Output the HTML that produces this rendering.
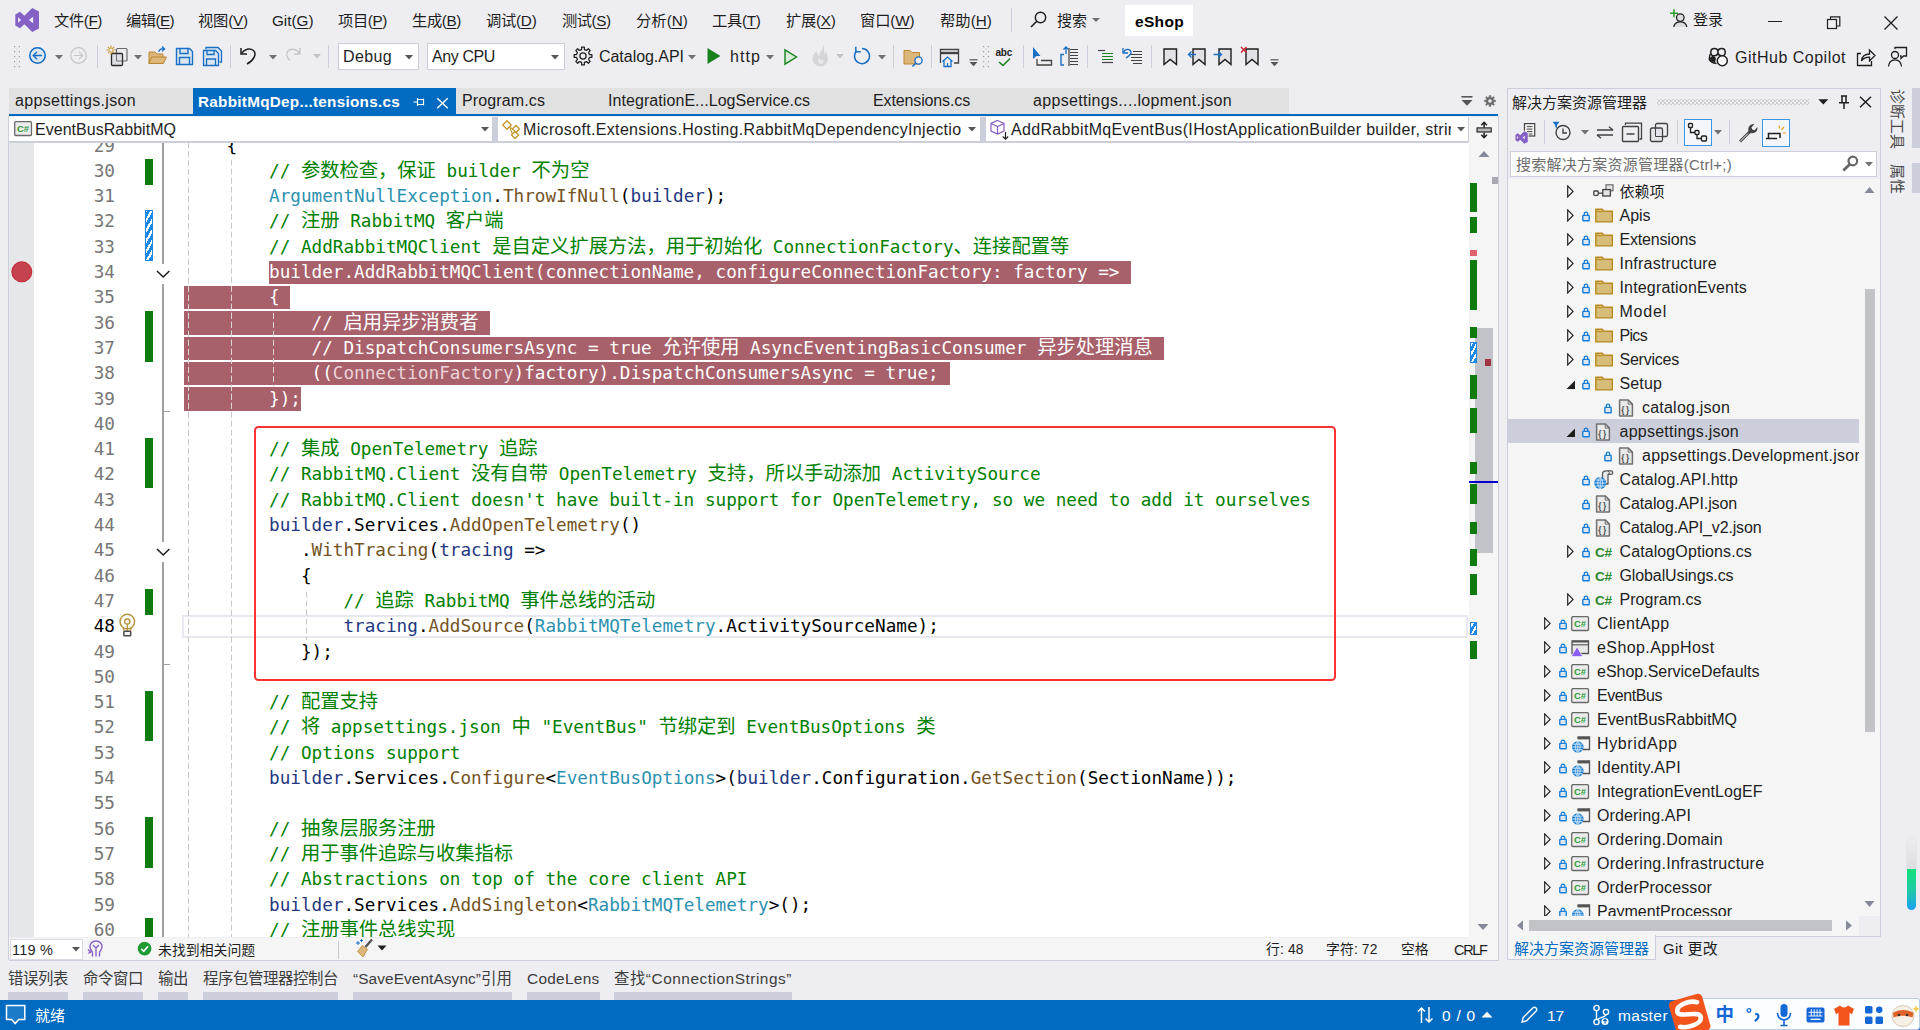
<!DOCTYPE html>
<html lang="zh-CN"><head><meta charset="utf-8"><title>eShop - Microsoft Visual Studio</title>
<style>
html,body{margin:0;padding:0;}
body{width:1920px;height:1030px;overflow:hidden;background:#eeeef2;position:relative;font-family:"Liberation Sans","Noto Sans CJK SC",sans-serif;font-size:15px;color:#1e1e1e;}
div,span.t,svg{position:absolute;box-sizing:border-box;}
span.t{white-space:pre;display:block;}
.u{text-decoration:underline;text-underline-offset:2px;text-decoration-thickness:1px;}
.cl{position:absolute;left:184px;height:25.3px;line-height:25.3px;white-space:pre;font-family:"DejaVu Sans Mono","Liberation Mono","Noto Sans CJK SC",monospace;font-size:17.67px;color:#000;}
.cl .c{font-family:"Noto Sans CJK SC",sans-serif;font-size:19.3px;line-height:0;}
.ln{position:absolute;left:51px;width:55px;text-align:right;height:25.3px;line-height:25.3px;font-family:"DejaVu Sans Mono","Liberation Mono","Noto Sans CJK SC",monospace;font-size:17.67px;color:#767676;}
.cm{color:#008000} .ty{color:#2b91af} .fn{color:#74531f} .lv{color:#1f377f} .kw{color:#0000ff}
.sel,.sel span{color:#fff !important}
.sel span.dim{color:#ecd3d7 !important}
</style></head>
<body>
<svg style="left:15px;top:8px;" width="25" height="25" viewBox="0 0 25 25"><path d="M17.2 0.1 L24 3.4 V20.6 L17.2 23.9 L9.4 16.3 L5 20.2 L0.3 17.4 V6.6 L5 3.8 L9.4 7.7 Z M3.1 9.2 V14.8 L6.1 12 Z M18.1 8.7 V15.3 L13.9 12 Z" fill="#8661c5" fill-rule="evenodd"/></svg>
<span id="f0" class="t" style="left:54px;top:11.0px;height:20px;line-height:20px;font-size:15.3px;color:#1e1e1e;letter-spacing:-0.43px;">文件(<span class="u">F</span>)</span>
<span id="f1" class="t" style="left:126px;top:11.0px;height:20px;line-height:20px;font-size:15.3px;color:#1e1e1e;letter-spacing:-0.60px;">编辑(<span class="u">E</span>)</span>
<span id="f2" class="t" style="left:198px;top:11.0px;height:20px;line-height:20px;font-size:15.3px;color:#1e1e1e;letter-spacing:-0.20px;">视图(<span class="u">V</span>)</span>
<span id="f3" class="t" style="left:272px;top:11.0px;height:20px;line-height:20px;font-size:15.3px;color:#1e1e1e;letter-spacing:-0.03px;">Git(<span class="u">G</span>)</span>
<span id="f4" class="t" style="left:338px;top:11.0px;height:20px;line-height:20px;font-size:15.3px;color:#1e1e1e;letter-spacing:-0.40px;">项目(<span class="u">P</span>)</span>
<span id="f5" class="t" style="left:412px;top:11.0px;height:20px;line-height:20px;font-size:15.3px;color:#1e1e1e;letter-spacing:-0.40px;">生成(<span class="u">B</span>)</span>
<span id="f6" class="t" style="left:486px;top:11.0px;height:20px;line-height:20px;font-size:15.3px;color:#1e1e1e;letter-spacing:-0.28px;">调试(<span class="u">D</span>)</span>
<span id="f7" class="t" style="left:562px;top:11.0px;height:20px;line-height:20px;font-size:15.3px;color:#1e1e1e;letter-spacing:-0.50px;">测试(<span class="u">S</span>)</span>
<span id="f8" class="t" style="left:636px;top:11.0px;height:20px;line-height:20px;font-size:15.3px;color:#1e1e1e;letter-spacing:0.03px;">分析(<span class="u">N</span>)</span>
<span id="f9" class="t" style="left:712px;top:11.0px;height:20px;line-height:20px;font-size:15.3px;color:#1e1e1e;letter-spacing:-0.33px;">工具(<span class="u">T</span>)</span>
<span id="f10" class="t" style="left:786px;top:11.0px;height:20px;line-height:20px;font-size:15.3px;color:#1e1e1e;letter-spacing:-0.30px;">扩展(<span class="u">X</span>)</span>
<span id="f11" class="t" style="left:860px;top:11.0px;height:20px;line-height:20px;font-size:15.3px;color:#1e1e1e;letter-spacing:-0.15px;">窗口(<span class="u">W</span>)</span>
<span id="f12" class="t" style="left:940px;top:11.0px;height:20px;line-height:20px;font-size:15.3px;color:#1e1e1e;letter-spacing:0.03px;">帮助(<span class="u">H</span>)</span>
<div style="left:1011px;top:8px;width:1px;height:24px;background:#cccedb;"></div>
<svg style="left:1029px;top:10px;" width="20" height="20" viewBox="0 0 20 20"><circle cx="11.5" cy="7.5" r="5.2" fill="none" stroke="#1e1e1e" stroke-width="1.4"/><path d="M7.8 11.2 L2 17" stroke="#1e1e1e" stroke-width="1.6" fill="none"/></svg>
<span class="t" style="left:1057px;top:10.6px;height:20px;line-height:20px;font-size:15px;color:#1e1e1e;">搜索</span>
<svg style="left:1091px;top:17px;" width="10" height="6" viewBox="0 0 10 6"><path d="M1 1 H9 L5 5 Z" fill="#717171"/></svg>
<div style="left:1125px;top:5px;width:68px;height:31px;background:#ffffff;"></div>
<span id="f13" class="t" style="left:1135px;top:11.8px;height:20px;line-height:20px;font-size:15.5px;color:#000;font-weight:bold;letter-spacing:0.33px;">eShop</span>
<svg style="left:1669px;top:8px;" width="20" height="20" viewBox="0 0 20 20"><circle cx="11.3" cy="9.6" r="3.8" fill="#dcdce2" stroke="#1e1e1e" stroke-width="1.3"/><path d="M4.8 19 C5.3 15.2 8.2 13.8 11.3 13.8 C14.4 13.8 17.3 15.2 17.8 19" fill="#dcdce2" stroke="#1e1e1e" stroke-width="1.3"/><path d="M1 5.3 H9 M5 1.3 V9.3" stroke="#2a9a2a" stroke-width="1.5"/></svg>
<span class="t" style="left:1693px;top:10.0px;height:20px;line-height:20px;font-size:15px;color:#1e1e1e;">登录</span>
<div style="left:1768px;top:20.8px;width:14px;height:1.1px;background:#1e1e1e;"></div>
<svg style="left:1825.5px;top:15px;" width="16" height="16" viewBox="0 0 16 16"><rect x="1.5" y="4.5" width="9" height="9" fill="none" stroke="#1e1e1e" stroke-width="1.2"/><path d="M4.5 4.5 V1.8 H13.8 V11 H10.5" fill="none" stroke="#1e1e1e" stroke-width="1.2"/></svg>
<svg style="left:1883px;top:14.6px;" width="16" height="16" viewBox="0 0 16 16"><path d="M1.5 1.5 L14.5 14.5 M14.5 1.5 L1.5 14.5" stroke="#1e1e1e" stroke-width="1.3"/></svg>
<svg style="left:13px;top:46px;" width="8" height="24" viewBox="0 0 8 24"><rect x="1.1" y="0.1" width="1.1" height="1.1" fill="#8a8a92"/><rect x="5.8" y="0.1" width="1.1" height="1.1" fill="#8a8a92"/><rect x="3.5" y="2.6" width="1.1" height="1.1" fill="#c4c4cc"/><rect x="1.1" y="5.1" width="1.1" height="1.1" fill="#8a8a92"/><rect x="5.8" y="5.1" width="1.1" height="1.1" fill="#8a8a92"/><rect x="3.5" y="7.6" width="1.1" height="1.1" fill="#c4c4cc"/><rect x="1.1" y="10.1" width="1.1" height="1.1" fill="#8a8a92"/><rect x="5.8" y="10.1" width="1.1" height="1.1" fill="#8a8a92"/><rect x="3.5" y="12.6" width="1.1" height="1.1" fill="#c4c4cc"/><rect x="1.1" y="15.1" width="1.1" height="1.1" fill="#8a8a92"/><rect x="5.8" y="15.1" width="1.1" height="1.1" fill="#8a8a92"/><rect x="3.5" y="17.6" width="1.1" height="1.1" fill="#c4c4cc"/><rect x="1.1" y="20.1" width="1.1" height="1.1" fill="#8a8a92"/><rect x="5.8" y="20.1" width="1.1" height="1.1" fill="#8a8a92"/></svg>
<svg style="left:27.8px;top:45.9px;" width="19" height="19" viewBox="0 0 19 19"><circle cx="9.5" cy="9.5" r="7.7" fill="#dce6f2" stroke="#0f69c0" stroke-width="1.5"/><path d="M14 9.5 H5.5 M9 5.8 L5.3 9.5 L9 13.2" fill="none" stroke="#1a6fc4" stroke-width="1.4"/></svg>
<svg style="left:55px;top:54.6px;" width="8" height="5" viewBox="0 0 8 5"><path d="M0 0 H8 L4 4.5 Z" fill="#717171"/></svg>
<svg style="left:69px;top:46.2px;" width="19" height="19" viewBox="0 0 19 19"><circle cx="9.5" cy="9.5" r="7.8" fill="none" stroke="#c4c4cc" stroke-width="1.2"/><path d="M5 9.5 H13.5 M10 5.8 L13.7 9.5 L10 13.2" fill="none" stroke="#c4c4cc" stroke-width="1.2"/></svg>
<div style="left:97px;top:45px;width:1px;height:23px;background:#cccedb;"></div>
<svg style="left:106px;top:45px;" width="23" height="22" viewBox="0 0 23 22"><rect x="10.5" y="3.5" width="10.5" height="12.5" rx="1" fill="#ececf0" stroke="#6a6a6a" stroke-width="1.2"/><rect x="5.5" y="8.5" width="11" height="12" rx="1" fill="#dedee6" stroke="#2a2a2a" stroke-width="1.3"/><path d="M10.5 9 V16 H16.5" fill="none" stroke="#6a6a6a" stroke-width="0.9"/><path d="M5 0.5 V9.5 M0.5 5 H9.5 M1.8 1.8 L8.2 8.2 M8.2 1.8 L1.8 8.2" stroke="#c8962a" stroke-width="1.1"/><circle cx="5" cy="5" r="1.6" fill="#eeeef2"/></svg>
<svg style="left:134px;top:54.6px;" width="8" height="5" viewBox="0 0 8 5"><path d="M0 0 H8 L4 4.5 Z" fill="#717171"/></svg>
<svg style="left:148px;top:46px;" width="21" height="20" viewBox="0 0 21 20"><path d="M1 6 H7 L9 8 H15 V17 H1 Z" fill="#dcb67a" stroke="#b8862e" stroke-width="1"/><path d="M3.5 11 H18.5 L15.5 17.5 H0.8 Z" fill="#dcb67a" stroke="#b8862e" stroke-width="1"/><path d="M11 6 C11 3.5 13 2.5 16 2.8 M14 0.6 L16.6 2.9 L14 5.4" fill="none" stroke="#1a6fc4" stroke-width="1.3"/></svg>
<svg style="left:175px;top:47px;" width="19" height="19" viewBox="0 0 19 19"><path d="M1.5 1.5 H14.5 L17.5 4.5 V17.5 H1.5 Z" fill="#dbe6f3" stroke="#1a6fc4" stroke-width="1.4"/><path d="M5 1.5 V6.5 H13 V1.5 M4.5 17.5 V10.5 H14.5 V17.5" fill="none" stroke="#1a6fc4" stroke-width="1.4"/></svg>
<svg style="left:202px;top:46px;" width="21" height="21" viewBox="0 0 21 21"><path d="M4 3.5 V1.5 H16 L19.5 5 V16 H17.5" fill="#dbe6f3" stroke="#1a6fc4" stroke-width="1.3"/><path d="M1.5 4.5 H13.5 L16.5 7.5 V19.5 H1.5 Z" fill="#dbe6f3" stroke="#1a6fc4" stroke-width="1.3"/><path d="M5 4.5 V8.5 H12 V4.5 M4.5 19.5 V13 H13.5 V19.5" fill="none" stroke="#1a6fc4" stroke-width="1.3"/></svg>
<div style="left:230px;top:45px;width:1px;height:23px;background:#cccedb;"></div>
<svg style="left:239px;top:46px;" width="20" height="20" viewBox="0 0 20 20"><path d="M2 2 V8 H8" fill="none" stroke="#1e1e1e" stroke-width="1.5"/><path d="M2.5 7.5 C5 3 11 1.5 14.5 4.5 C18 8 15 14 8 18" fill="none" stroke="#1e1e1e" stroke-width="1.5"/></svg>
<svg style="left:269px;top:54.6px;" width="8" height="5" viewBox="0 0 8 5"><path d="M0 0 H8 L4 4.5 Z" fill="#717171"/></svg>
<svg style="left:284px;top:46px;" width="20" height="20" viewBox="0 0 20 20"><path d="M16 2 V8 H10" fill="none" stroke="#c4c4cc" stroke-width="1.4"/><path d="M15.5 7.5 C13 3 7 2 4 5 C1.5 8 3 12 6 14.5" fill="none" stroke="#c4c4cc" stroke-width="1.4"/></svg>
<svg style="left:313px;top:54px;" width="8" height="5" viewBox="0 0 8 5"><path d="M0 0 H8 L4 4.5 Z" fill="#c0c0c8"/></svg>
<div style="left:328px;top:45px;width:1px;height:23px;background:#cccedb;"></div>
<div style="left:338px;top:43.2px;width:80.6px;height:26.6px;background:#ffffff;border:1.2px solid #cdcedd;"></div>
<span id="f14" class="t" style="left:343px;top:47.0px;height:20px;line-height:20px;font-size:16px;color:#1e1e1e;letter-spacing:0.37px;">Debug</span>
<svg style="left:405px;top:55px;" width="8" height="5" viewBox="0 0 8 5"><path d="M0 0 H8 L4 4.5 Z" fill="#555"/></svg>
<div style="left:426.9px;top:43.2px;width:137.9px;height:26.6px;background:#ffffff;border:1.2px solid #cdcedd;"></div>
<span id="f15" class="t" style="left:432px;top:47.0px;height:20px;line-height:20px;font-size:16px;color:#1e1e1e;letter-spacing:-0.40px;">Any CPU</span>
<svg style="left:551px;top:55px;" width="8" height="5" viewBox="0 0 8 5"><path d="M0 0 H8 L4 4.5 Z" fill="#555"/></svg>
<svg style="left:573px;top:46px;" width="20" height="20" viewBox="0 0 20 20"><path d="M16.45 8.59 L18.90 8.66 L18.90 11.34 L16.45 11.41 L15.56 13.56 L17.24 15.35 L15.35 17.24 L13.56 15.56 L11.41 16.45 L11.34 18.90 L8.66 18.90 L8.59 16.45 L6.44 15.56 L4.65 17.24 L2.76 15.35 L4.44 13.56 L3.55 11.41 L1.10 11.34 L1.10 8.66 L3.55 8.59 L4.44 6.44 L2.76 4.65 L4.65 2.76 L6.44 4.44 L8.59 3.55 L8.66 1.10 L11.34 1.10 L11.41 3.55 L13.56 4.44 L15.35 2.76 L17.24 4.65 L15.56 6.44 Z" fill="none" stroke="#1e1e1e" stroke-width="1.25" stroke-linejoin="round"/><circle cx="10" cy="10" r="3.1" fill="none" stroke="#1e1e1e" stroke-width="1.25"/></svg>
<span id="f16" class="t" style="left:599px;top:47.0px;height:20px;line-height:20px;font-size:16px;color:#1e1e1e;letter-spacing:-0.04px;">Catalog.API</span>
<svg style="left:688px;top:54.6px;" width="8" height="5" viewBox="0 0 8 5"><path d="M0 0 H8 L4 4.5 Z" fill="#717171"/></svg>
<svg style="left:706px;top:47px;" width="16" height="18" viewBox="0 0 16 18"><path d="M1.5 1 L14.5 9 L1.5 17 Z" fill="#16831f"/></svg>
<span id="f17" class="t" style="left:730px;top:47.0px;height:20px;line-height:20px;font-size:16px;color:#1e1e1e;letter-spacing:1.08px;">http</span>
<svg style="left:766px;top:54.6px;" width="8" height="5" viewBox="0 0 8 5"><path d="M0 0 H8 L4 4.5 Z" fill="#717171"/></svg>
<svg style="left:783px;top:48px;" width="16" height="18" viewBox="0 0 16 18"><path d="M2 1.8 L13.5 9 L2 16.2 Z" fill="#d9ecd9" stroke="#16831f" stroke-width="1.4"/></svg>
<svg style="left:810px;top:44px;" width="20" height="24" viewBox="0 0 20 24"><path d="M13.5 0.8 C14 5.5 8.5 8 9.5 12.5 C6.5 10.5 7 7 7 7 C2.5 10 1 15.5 4.5 19.8 C8 23.6 15 23 17.3 18 C19.3 13.5 16 10 16.2 6.5 C15 7.8 14.5 9 14.5 10.8 C13 8 15.5 4 13.5 0.8 Z" fill="#d4d4da"/><path d="M9 14 C7 16 7.5 19.5 10.5 20.5 C13.5 19.8 14 16.5 12.5 14.5 C12 16 11 16.3 10.5 16 C10.5 15 9.8 14.5 9 14 Z" fill="#e6e6ea"/></svg>
<svg style="left:836px;top:54px;" width="8" height="5" viewBox="0 0 8 5"><path d="M0 0 H8 L4 4.5 Z" fill="#c0c0c8"/></svg>
<svg style="left:851px;top:46px;" width="20" height="20" viewBox="0 0 20 20"><path d="M5.5 5 A7.5 7.5 0 1 0 11 2.6" fill="none" stroke="#1a6fc4" stroke-width="1.5"/><path d="M4.8 0.8 V5.8 H9.8" fill="none" stroke="#1a6fc4" stroke-width="1.5"/></svg>
<svg style="left:878px;top:54.6px;" width="8" height="5" viewBox="0 0 8 5"><path d="M0 0 H8 L4 4.5 Z" fill="#717171"/></svg>
<div style="left:893px;top:45px;width:1px;height:23px;background:#cccedb;"></div>
<svg style="left:902.5px;top:47px;" width="22" height="21" viewBox="0 0 22 21"><path d="M1 3.5 H7 L9 5.5 H16.5 V17 H1 Z" fill="#dcb67a" stroke="#b8862e" stroke-width="1"/><circle cx="15.5" cy="13.5" r="3.6" fill="#eeeef2" stroke="#1a6fc4" stroke-width="1.4"/><path d="M13 16 L9.5 19.5" stroke="#1a6fc4" stroke-width="1.6"/></svg>
<div style="left:931px;top:45px;width:1px;height:23px;background:#cccedb;"></div>
<svg style="left:938.5px;top:47.3px;" width="21" height="21" viewBox="0 0 21 21"><path d="M1.5 16 V2.5 H19.5 V16 H15" fill="none" stroke="#424242" stroke-width="1.3"/><path d="M1.5 6 H19.5" stroke="#424242" stroke-width="2.4"/><path d="M3.5 14.5 L8.5 10 L13.5 14.5 M5 13.5 V19.5 H12 V13.5 M8.5 19.5 V16" fill="none" stroke="#1a6fc4" stroke-width="1.3"/></svg>
<svg style="left:969px;top:59px;" width="9" height="8" viewBox="0 0 9 8"><path d="M0.5 0.8 H8.5" stroke="#555" stroke-width="1.2"/><path d="M0.5 3 H8.5 L4.5 7.2 Z" fill="#555"/></svg>
<svg style="left:982px;top:46px;" width="8" height="24" viewBox="0 0 8 24"><rect x="1.1" y="0.1" width="1.1" height="1.1" fill="#8a8a92"/><rect x="5.8" y="0.1" width="1.1" height="1.1" fill="#8a8a92"/><rect x="3.5" y="2.6" width="1.1" height="1.1" fill="#c4c4cc"/><rect x="1.1" y="5.1" width="1.1" height="1.1" fill="#8a8a92"/><rect x="5.8" y="5.1" width="1.1" height="1.1" fill="#8a8a92"/><rect x="3.5" y="7.6" width="1.1" height="1.1" fill="#c4c4cc"/><rect x="1.1" y="10.1" width="1.1" height="1.1" fill="#8a8a92"/><rect x="5.8" y="10.1" width="1.1" height="1.1" fill="#8a8a92"/><rect x="3.5" y="12.6" width="1.1" height="1.1" fill="#c4c4cc"/><rect x="1.1" y="15.1" width="1.1" height="1.1" fill="#8a8a92"/><rect x="5.8" y="15.1" width="1.1" height="1.1" fill="#8a8a92"/><rect x="3.5" y="17.6" width="1.1" height="1.1" fill="#c4c4cc"/><rect x="1.1" y="20.1" width="1.1" height="1.1" fill="#8a8a92"/><rect x="5.8" y="20.1" width="1.1" height="1.1" fill="#8a8a92"/></svg>
<svg style="left:995px;top:46px;" width="20" height="20" viewBox="0 0 20 20"><path d="M4 16 L8 19.5 L15 12.5" fill="none" stroke="#16831f" stroke-width="1.5"/></svg>
<span class="t" style="left:995.5px;top:47.0px;height:12px;line-height:12px;font-size:10px;color:#1e1e1e;font-weight:bold;letter-spacing:-0.2px;">abc</span>
<div style="left:1023px;top:45px;width:1px;height:23px;background:#cccedb;"></div>
<svg style="left:1031px;top:46px;" width="23" height="21" viewBox="0 0 23 21"><path d="M2 1 V13 L5.3 10 L9.5 10 Z" fill="#1a6fc4"/><path d="M6 13 V19 H20.5 V14.5 H10" fill="none" stroke="#424242" stroke-width="1.3"/></svg>
<svg style="left:1059px;top:46px;" width="20" height="21" viewBox="0 0 20 21"><path d="M5 8.5 H2 V19 H5" fill="none" stroke="#1a6fc4" stroke-width="1.4"/><path d="M4.5 3.5 L7 1 L9.5 3.5 M7 1.5 V8" fill="none" stroke="#1a6fc4" stroke-width="1.3"/><path d="M11 3.5 H19 M11 6.5 H19 M11 9.5 H19 M11 12.5 H19 M11 15.5 H19 M11 18.5 H19" stroke="#424242" stroke-width="1.2"/><path d="M10 2 V20" stroke="#424242" stroke-width="1.2"/></svg>
<div style="left:1087px;top:45px;width:1px;height:23px;background:#cccedb;"></div>
<svg style="left:1097px;top:48px;" width="18" height="18" viewBox="0 0 18 18"><path d="M1 2.5 H8" stroke="#424242" stroke-width="1.2"/><path d="M5 5.5 H16 M5 8.5 H16 M5 11.5 H16" stroke="#16831f" stroke-width="1.2"/><path d="M5 14.5 H16" stroke="#424242" stroke-width="1.2"/></svg>
<svg style="left:1121px;top:46px;" width="22" height="21" viewBox="0 0 22 21"><path d="M2 2 V7 H7" fill="none" stroke="#1a6fc4" stroke-width="1.3"/><path d="M2.5 6.5 C4 2.5 9 2.5 10 6 C10.5 9 7 10.5 5 12" fill="none" stroke="#1a6fc4" stroke-width="1.3"/><path d="M12 5.5 H21 M10 8.5 H21 M10 11.5 H21 M10 14.5 H21 M12 17.5 H21" stroke="#424242" stroke-width="1.2"/></svg>
<div style="left:1151px;top:45px;width:1px;height:23px;background:#cccedb;"></div>
<svg style="left:1162px;top:47px;" width="17" height="20" viewBox="0 0 17 20"><path d="M2 2 H14.5 V17.5 L8.2 12.5 L2 17.5 Z" fill="#e2e2e6" stroke="#1e1e1e" stroke-width="1.4"/></svg>
<svg style="left:1187px;top:47px;" width="20" height="20" viewBox="0 0 20 20"><path d="M6 2 H18 V17.5 L12 12.5 L6 17.5 Z" fill="#e2e2e6" stroke="#1e1e1e" stroke-width="1.4"/><path d="M9 7.5 H1.5 M4.5 4.5 L1.5 7.5 L4.5 10.5" fill="none" stroke="#1a6fc4" stroke-width="1.3"/></svg>
<svg style="left:1213px;top:47px;" width="20" height="20" viewBox="0 0 20 20"><path d="M6 2 H18 V17.5 L12 12.5 L6 17.5 Z" fill="#e2e2e6" stroke="#1e1e1e" stroke-width="1.4"/><path d="M0.5 7.5 H8.5 M5.5 4.5 L8.5 7.5 L5.5 10.5" fill="none" stroke="#1a6fc4" stroke-width="1.3"/></svg>
<svg style="left:1240px;top:46px;" width="20" height="21" viewBox="0 0 20 21"><path d="M6 3 H18 V18.5 L12 13.5 L6 18.5 Z" fill="#e2e2e6" stroke="#1e1e1e" stroke-width="1.4"/><path d="M1 1 L6.5 6.5 M6.5 1 L1 6.5" stroke="#d0202a" stroke-width="1.4"/></svg>
<svg style="left:1270px;top:59px;" width="9" height="8" viewBox="0 0 9 8"><path d="M0.5 0.8 H8.5" stroke="#555" stroke-width="1.2"/><path d="M0.5 3 H8.5 L4.5 7.2 Z" fill="#555"/></svg>
<svg style="left:1708px;top:46px;" width="22" height="22" viewBox="0 0 22 22"><path d="M6.3 2.6 C3.8 2.6 2.8 4 2.8 6.2 C2.8 8.6 3.8 9.8 6 9.8 C8.6 9.8 10 8.8 10 6 C10 3.6 8.8 2.6 6.3 2.6 Z M13.7 2.6 C11.2 2.6 10 3.6 10 6 C10 8.8 11.4 9.8 14 9.8 C16.2 9.8 17.2 8.6 17.2 6.2 C17.2 4 16.2 2.6 13.7 2.6 Z" fill="none" stroke="#1e1e1e" stroke-width="1.5"/><path d="M2.9 7.5 C1.6 8.6 1.4 10 1.4 12 V13.8 C2.8 15.8 5.5 17.2 8.5 17.6" fill="none" stroke="#1e1e1e" stroke-width="1.5"/><path d="M1.6 12 C2 14 4 16 7 16.8 L8 12 L5 9.5 Z" fill="#1e1e1e"/><circle cx="14.3" cy="14.8" r="5" fill="#ffffff" stroke="#1e1e1e" stroke-width="1.5"/></svg>
<span id="f18" class="t" style="left:1735px;top:48.0px;height:20px;line-height:20px;font-size:16px;color:#1e1e1e;letter-spacing:0.50px;">GitHub Copilot</span>
<svg style="left:1856px;top:47px;" width="21" height="20" viewBox="0 0 21 20"><path d="M5 6.5 H1.5 V18.5 H15.5 V14" fill="none" stroke="#1e1e1e" stroke-width="1.3"/><path d="M5.5 14 C6 9.5 9 7 13.5 7 V3 L19 8.5 L13.5 14 V10.2 C10 10.2 7.5 11 5.5 14 Z" fill="none" stroke="#1e1e1e" stroke-width="1.3"/></svg>
<svg style="left:1887px;top:46px;" width="21" height="22" viewBox="0 0 21 22"><circle cx="8" cy="9" r="3.5" fill="none" stroke="#1e1e1e" stroke-width="1.3"/><path d="M1.5 20.5 C2 15.5 5 13.8 8 13.8 C11 13.8 14 15.5 14.5 20.5" fill="none" stroke="#1e1e1e" stroke-width="1.3"/><path d="M8 3 V1.5 H19.5 V10 H16.5 L14 12.5 V10 H13" fill="none" stroke="#1e1e1e" stroke-width="1.3"/></svg>
<div style="left:9px;top:88px;width:1280px;height:26px;background:#e1e1e1;"></div>
<div style="left:193px;top:88px;width:263px;height:27px;background:#006bc1;"></div>
<div style="left:9px;top:113.8px;width:1489.2px;height:2.6px;background:#006bc1;"></div>
<span id="f19" class="t" style="left:15px;top:91.2px;height:20px;line-height:20px;font-size:16px;color:#1e1e1e;letter-spacing:0.34px;">appsettings.json</span>
<span id="f20" class="t" style="left:198px;top:92.0px;height:20px;line-height:20px;font-size:15.3px;color:#ffffff;font-weight:bold;letter-spacing:0.26px;">RabbitMqDep...tensions.cs</span>
<svg style="left:412.5px;top:96px;" width="13" height="12" viewBox="0 0 13 12"><path d="M0.5 6 H4.5 M4.5 2 V10 M4.5 3.5 H10.5 V8.5 H4.5 M10.5 2.8 V9.2" fill="none" stroke="#ffffff" stroke-width="1.2"/></svg>
<svg style="left:434.5px;top:95.5px;" width="15" height="15" viewBox="0 0 15 15"><path d="M2.2 2.2 L12.8 12.2 M12.8 2.2 L2.2 12.2" stroke="#ffffff" stroke-width="1.4"/></svg>
<span id="f21" class="t" style="left:462px;top:91.2px;height:20px;line-height:20px;font-size:16px;color:#1e1e1e;letter-spacing:0.12px;">Program.cs</span>
<span id="f22" class="t" style="left:608px;top:91.2px;height:20px;line-height:20px;font-size:16px;color:#1e1e1e;letter-spacing:0.07px;">IntegrationE...LogService.cs</span>
<span id="f23" class="t" style="left:873px;top:91.2px;height:20px;line-height:20px;font-size:16px;color:#1e1e1e;letter-spacing:-0.13px;">Extensions.cs</span>
<span id="f24" class="t" style="left:1033px;top:91.2px;height:20px;line-height:20px;font-size:16px;color:#1e1e1e;letter-spacing:0.32px;">appsettings....lopment.json</span>
<svg style="left:1461px;top:95px;" width="12" height="12" viewBox="0 0 12 12"><path d="M0.5 1.8 H11.5" stroke="#555" stroke-width="1.6"/><path d="M0.5 5 H11.5 L6 10.8 Z" fill="#555"/></svg>
<svg style="left:1484px;top:95px;" width="12" height="12" viewBox="0 0 14 14"><path d="M11.49 6.01 L13.53 6.02 L13.53 7.98 L11.49 7.99 L10.87 9.48 L12.31 10.92 L10.92 12.31 L9.48 10.87 L7.99 11.49 L7.98 13.53 L6.02 13.53 L6.01 11.49 L4.52 10.87 L3.08 12.31 L1.69 10.92 L3.13 9.48 L2.51 7.99 L0.47 7.98 L0.47 6.02 L2.51 6.01 L3.13 4.52 L1.69 3.08 L3.08 1.69 L4.52 3.13 L6.01 2.51 L6.02 0.47 L7.98 0.47 L7.99 2.51 L9.48 3.13 L10.92 1.69 L12.31 3.08 L10.87 4.52 Z" fill="#6a6a6a" stroke="#6a6a6a" stroke-width="0.6" stroke-linejoin="round"/><circle cx="7" cy="7" r="2.1" fill="#eeeef2"/></svg>
<div style="left:9px;top:116.5px;width:1460px;height:25px;background:#ffffff;"></div>
<div style="left:9px;top:141px;width:1490px;height:1.8px;background:#cccedb;"></div>
<div style="left:492.2px;top:116.5px;width:5.6px;height:25px;background:#cccedb;"></div>
<div style="left:980.2px;top:116.5px;width:5.6px;height:25px;background:#cccedb;"></div>
<svg style="left:14px;top:121.3px;" width="19" height="16" viewBox="0 0 19 16"><rect x="0.7" y="0.7" width="16.8" height="13.8" rx="1" fill="#ebebeb" stroke="#6a6a6a" stroke-width="1.3"/><text x="9.1" y="11.2" font-family="Liberation Sans,sans-serif" font-size="9.4" font-weight="bold" fill="#2f9a38" text-anchor="middle">C#</text></svg>
<span id="f25" class="t" style="left:35px;top:120.2px;height:20px;line-height:20px;font-size:16px;color:#1e1e1e;letter-spacing:0.03px;">EventBusRabbitMQ</span>
<svg style="left:481px;top:127px;" width="8" height="5" viewBox="0 0 8 5"><path d="M0 0 H8 L4 4.5 Z" fill="#555"/></svg>
<svg style="left:501px;top:120px;" width="20" height="19" viewBox="0 0 20 19"><rect x="3" y="2" width="6" height="6" transform="rotate(45 6 5)" fill="none" stroke="#c8962a" stroke-width="1.3"/><rect x="12.5" y="6.5" width="5" height="5" fill="none" stroke="#c8962a" stroke-width="1.3" transform="rotate(45 15 9)"/><rect x="11.5" y="12.5" width="5" height="5" fill="none" stroke="#c8962a" stroke-width="1.3" transform="rotate(45 14 15)"/><path d="M8 7 L12 9 M9 8 L11.5 14" stroke="#c8962a" stroke-width="1.1"/></svg>
<div style="left:523px;top:118px;width:439px;height:23px;overflow:hidden;"><span id="f26" class="t" style="left:0px;top:2.2px;height:20px;line-height:20px;font-size:16px;color:#1e1e1e;letter-spacing:0.34px;">Microsoft.Extensions.Hosting.RabbitMqDependencyInjection</span></div>
<svg style="left:968px;top:127px;" width="8" height="5" viewBox="0 0 8 5"><path d="M0 0 H8 L4 4.5 Z" fill="#555"/></svg>
<svg style="left:989px;top:119px;" width="21" height="22" viewBox="0 0 21 22"><path d="M8.5 1.5 L15 4.5 V12 L8.5 15 L2 12 V4.5 Z M2 4.5 L8.5 7.5 L15 4.5 M8.5 7.5 V15" fill="none" stroke="#8661c5" stroke-width="1.2"/><path d="M16.5 13 V20 M13.8 17.5 L16.5 20.2 L19.2 17.5" fill="none" stroke="#1e1e1e" stroke-width="1.2"/></svg>
<div style="left:1011px;top:118px;width:440px;height:23px;overflow:hidden;"><span id="f27" class="t" style="left:0px;top:2.2px;height:20px;line-height:20px;font-size:16px;color:#1e1e1e;letter-spacing:0.33px;">AddRabbitMqEventBus(IHostApplicationBuilder builder, string</span></div>
<svg style="left:1457px;top:127px;" width="8" height="5" viewBox="0 0 8 5"><path d="M0 0 H8 L4 4.5 Z" fill="#555"/></svg>
<div style="left:1468.4px;top:116.5px;width:30px;height:26.9px;background:#f5f5f5;border-left:1.3px solid #cccedb;border-bottom:1.1px solid #cccedb;"></div>
<svg style="left:1476px;top:121px;" width="17" height="18" viewBox="0 0 17 18"><rect x="1" y="6.9" width="14.2" height="4.1" fill="#b8b8b8" stroke="#1e1e1e" stroke-width="1.1"/><path d="M8.1 6.5 V1.6 M5.3 4.2 L8.1 1.3 L10.9 4.2 M8.1 11.5 V16.4 M5.3 13.8 L8.1 16.7 L10.9 13.8" fill="none" stroke="#1e1e1e" stroke-width="1.5"/></svg>
<div style="left:9px;top:142.8px;width:1489px;height:794.7px;background:#ffffff;overflow:hidden;"><div style="left:0px;top:-0.8px;width:25px;height:796px;background:#e6e7e8;"></div>
<svg style="left:2px;top:118.69999999999999px;" width="22" height="22" viewBox="0 0 22 22"><circle cx="10.8" cy="10.8" r="9.9" fill="#c4434f" stroke="#c92b3e" stroke-width="1.2"/></svg>
<div style="left:173px;top:472.0px;width:1286px;height:23.7px;border:2.4px solid #e8e8f0;"></div>
<div style="left:260.1px;top:118.1px;width:861.68px;height:23.3px;background:#a8606a;"></div>
<div style="left:175.0px;top:143.4px;width:106.38px;height:23.3px;background:#a8606a;"></div>
<div style="left:175px;top:168.7px;width:306px;height:23.3px;background:#a8606a;"></div>
<div style="left:175px;top:194.0px;width:980px;height:23.3px;background:#a8606a;"></div>
<div style="left:175.0px;top:219.3px;width:765.94px;height:23.3px;background:#a8606a;"></div>
<div style="left:175.0px;top:244.6px;width:117.02px;height:23.3px;background:#a8606a;"></div>
<div style="left:178.7px;top:-0.8px;width:1.1px;height:796px;background:repeating-linear-gradient(to bottom,#c8c8c8 0,#c8c8c8 6.1px,transparent 6.1px,transparent 9px);background-position:0 -0.00px;background-size:100% 9px;"></div>
<div style="left:221.7px;top:16.5px;width:1.1px;height:778.7px;background:repeating-linear-gradient(to bottom,#c8c8c8 0,#c8c8c8 6.1px,transparent 6.1px,transparent 9px);background-position:0 -8.30px;background-size:100% 9px;"></div>
<div style="left:178.7px;top:143.4px;width:1.1px;height:124.5px;background:repeating-linear-gradient(to bottom,#dad6d6 0,#dad6d6 6.1px,transparent 6.1px,transparent 9px);background-position:0 -0.20px;background-size:100% 9px;"></div>
<div style="left:221.7px;top:143.4px;width:1.1px;height:124.5px;background:repeating-linear-gradient(to bottom,#dad6d6 0,#dad6d6 6.1px,transparent 6.1px,transparent 9px);background-position:0 -0.20px;background-size:100% 9px;"></div>
<div style="left:264.2px;top:168.3px;width:1.1px;height:75.9px;background:repeating-linear-gradient(to bottom,#dad6d6 0,#dad6d6 6.1px,transparent 6.1px,transparent 9px);background-position:0 -7.10px;background-size:100% 9px;"></div>
<div style="left:297.2px;top:446.6px;width:1.1px;height:50.6px;background:repeating-linear-gradient(to bottom,#c8c8c8 0,#c8c8c8 6.1px,transparent 6.1px,transparent 9px);background-position:0 -6.40px;background-size:100% 9px;"></div>
<div style="left:136.2px;top:16.5px;width:7.8px;height:25.3px;background:#107c10;"></div>
<div style="left:136.2px;top:168.3px;width:7.8px;height:50.6px;background:#107c10;"></div>
<div style="left:136.2px;top:294.8px;width:7.8px;height:50.6px;background:#107c10;"></div>
<div style="left:136.2px;top:446.6px;width:7.8px;height:25.3px;background:#107c10;"></div>
<div style="left:136.2px;top:547.8px;width:7.8px;height:50.6px;background:#107c10;"></div>
<div style="left:136.2px;top:674.3px;width:7.8px;height:50.6px;background:#107c10;"></div>
<div style="left:136.2px;top:775.5px;width:7.8px;height:25.3px;background:#107c10;"></div>
<div style="left:136.2px;top:67.6px;width:7.8px;height:50.8px;background:repeating-linear-gradient(-60deg,#1e88e8 0,#1e88e8 3px,#ffffff 3px,#ffffff 5.2px);border:1.2px solid #1e88e8;"></div>
<div style="left:153.2px;top:-0.8px;width:1.8px;height:121.64999999999998px;background:#a0a0a0;"></div>
<div style="left:153.2px;top:140.85px;width:1.8px;height:258.3px;background:#a0a0a0;"></div>
<div style="left:153.2px;top:419.15px;width:1.8px;height:376.05px;background:#a0a0a0;"></div>
<div style="left:154px;top:267.9px;width:7px;height:1.5px;background:#a0a0a0;"></div>
<div style="left:154px;top:520.9px;width:7px;height:1.5px;background:#a0a0a0;"></div>
<svg style="left:147px;top:127.15px;" width="15" height="9" viewBox="0 0 15 9"><path d="M1 1 L7.2 7 L13.4 1" fill="none" stroke="#1e1e1e" stroke-width="1.5"/></svg>
<svg style="left:147px;top:405.45px;" width="15" height="9" viewBox="0 0 15 9"><path d="M1 1 L7.2 7 L13.4 1" fill="none" stroke="#1e1e1e" stroke-width="1.5"/></svg>
<svg style="left:109px;top:470.65px;" width="19" height="25" viewBox="0 0 19 25"><circle cx="9.3" cy="8.6" r="7.3" fill="none" stroke="#b8963c" stroke-width="1.5"/><circle cx="9.3" cy="8.6" r="2.6" fill="none" stroke="#b8963c" stroke-width="1.4"/><path d="M9.3 11.2 V18" stroke="#b8963c" stroke-width="1.4"/><path d="M5.2 14.6 L6.2 18 M13.4 14.6 L12.4 18" stroke="#b8963c" stroke-width="1.3"/><rect x="5.9" y="18.2" width="6.8" height="4.6" rx="0.8" fill="#f5f5f5" stroke="#4a4a4a" stroke-width="1.5"/></svg>
<div class="ln" style="top:-9.2px;">29</div>
<div class="cl" style="left:175px;top:-9.2px;">    {</div>
<div class="ln" style="top:16.1px;">30</div>
<div class="cl" style="left:175px;top:16.1px;">        <span class="cm">// <span class="c">参数检查，保证</span> builder <span class="c">不为空</span></span></div>
<div class="ln" style="top:41.4px;">31</div>
<div class="cl" style="left:175px;top:41.4px;">        <span class="ty">ArgumentNullException</span>.<span class="fn">ThrowIfNull</span>(<span class="lv">builder</span>);</div>
<div class="ln" style="top:66.7px;">32</div>
<div class="cl" style="left:175px;top:66.7px;">        <span class="cm">// <span class="c">注册</span> RabbitMQ <span class="c">客户端</span></span></div>
<div class="ln" style="top:92.0px;">33</div>
<div class="cl" style="left:175px;top:92.0px;">        <span class="cm">// AddRabbitMQClient <span class="c">是自定义扩展方法，用于初始化</span> ConnectionFactory<span class="c">、连接配置等</span></span></div>
<div class="ln" style="top:117.3px;">34</div>
<div class="cl sel" style="left:175px;top:117.3px;">        builder.AddRabbitMQClient(connectionName, configureConnectionFactory: factory =&gt;</div>
<div class="ln" style="top:142.6px;">35</div>
<div class="cl sel" style="left:175px;top:142.6px;">        {</div>
<div class="ln" style="top:167.9px;">36</div>
<div class="cl sel" style="left:175px;top:167.9px;">            // <span class="c">启用异步消费者</span></div>
<div class="ln" style="top:193.2px;">37</div>
<div class="cl sel" style="left:175px;top:193.2px;">            // DispatchConsumersAsync = true <span class="c">允许使用</span> AsyncEventingBasicConsumer <span class="c">异步处理消息</span></div>
<div class="ln" style="top:218.5px;">38</div>
<div class="cl sel" style="left:175px;top:218.5px;">            ((<span class="dim">ConnectionFactory</span>)factory).DispatchConsumersAsync = true;</div>
<div class="ln" style="top:243.8px;">39</div>
<div class="cl sel" style="left:175px;top:243.8px;">        });</div>
<div class="ln" style="top:269.1px;">40</div>
<div class="ln" style="top:294.4px;">41</div>
<div class="cl" style="left:175px;top:294.4px;">        <span class="cm">// <span class="c">集成</span> OpenTelemetry <span class="c">追踪</span></span></div>
<div class="ln" style="top:319.7px;">42</div>
<div class="cl" style="left:175px;top:319.7px;">        <span class="cm">// RabbitMQ.Client <span class="c">没有自带</span> OpenTelemetry <span class="c">支持，所以手动添加</span> ActivitySource</span></div>
<div class="ln" style="top:345.0px;">43</div>
<div class="cl" style="left:175px;top:345.0px;">        <span class="cm">// RabbitMQ.Client doesn't have built-in support for OpenTelemetry, so we need to add it ourselves</span></div>
<div class="ln" style="top:370.3px;">44</div>
<div class="cl" style="left:175px;top:370.3px;">        <span class="lv">builder</span>.Services.<span class="fn">AddOpenTelemetry</span>()</div>
<div class="ln" style="top:395.6px;">45</div>
<div class="cl" style="left:175px;top:395.6px;">           .<span class="fn">WithTracing</span>(<span class="lv">tracing</span> =&gt;</div>
<div class="ln" style="top:420.9px;">46</div>
<div class="cl" style="left:175px;top:420.9px;">           {</div>
<div class="ln" style="top:446.2px;">47</div>
<div class="cl" style="left:175px;top:446.2px;">               <span class="cm">// <span class="c">追踪</span> RabbitMQ <span class="c">事件总线的活动</span></span></div>
<div class="ln" style="top:471.5px;color:#000;">48</div>
<div class="cl" style="left:175px;top:471.5px;">               <span class="lv">tracing</span>.<span class="fn">AddSource</span>(<span class="ty">RabbitMQTelemetry</span>.ActivitySourceName);</div>
<div class="ln" style="top:496.8px;">49</div>
<div class="cl" style="left:175px;top:496.8px;">           });</div>
<div class="ln" style="top:522.1px;">50</div>
<div class="ln" style="top:547.4px;">51</div>
<div class="cl" style="left:175px;top:547.4px;">        <span class="cm">// <span class="c">配置支持</span></span></div>
<div class="ln" style="top:572.7px;">52</div>
<div class="cl" style="left:175px;top:572.7px;">        <span class="cm">// <span class="c">将</span> appsettings.json <span class="c">中</span> "EventBus" <span class="c">节绑定到</span> EventBusOptions <span class="c">类</span></span></div>
<div class="ln" style="top:598.0px;">53</div>
<div class="cl" style="left:175px;top:598.0px;">        <span class="cm">// Options support</span></div>
<div class="ln" style="top:623.3px;">54</div>
<div class="cl" style="left:175px;top:623.3px;">        <span class="lv">builder</span>.Services.<span class="fn">Configure</span>&lt;<span class="ty">EventBusOptions</span>&gt;(<span class="lv">builder</span>.Configuration.<span class="fn">GetSection</span>(SectionName));</div>
<div class="ln" style="top:648.6px;">55</div>
<div class="ln" style="top:673.9px;">56</div>
<div class="cl" style="left:175px;top:673.9px;">        <span class="cm">// <span class="c">抽象层服务注册</span></span></div>
<div class="ln" style="top:699.2px;">57</div>
<div class="cl" style="left:175px;top:699.2px;">        <span class="cm">// <span class="c">用于事件追踪与收集指标</span></span></div>
<div class="ln" style="top:724.5px;">58</div>
<div class="cl" style="left:175px;top:724.5px;">        <span class="cm">// Abstractions on top of the core client API</span></div>
<div class="ln" style="top:749.8px;">59</div>
<div class="cl" style="left:175px;top:749.8px;">        <span class="lv">builder</span>.Services.<span class="fn">AddSingleton</span>&lt;<span class="ty">RabbitMQTelemetry</span>&gt;();</div>
<div class="ln" style="top:775.1px;">60</div>
<div class="cl" style="left:175px;top:775.1px;">        <span class="cm">// <span class="c">注册事件总线实现</span></span></div>
<div style="left:245px;top:283.0px;width:1082.2px;height:255.2px;border:2.5px solid #fb3030;border-radius:4.5px;"></div></div>
<div style="left:1468.5px;top:142px;width:30px;height:796px;background:#f5f5f5;"></div>
<div style="left:1498px;top:116px;width:1px;height:844px;background:#cccedb;"></div>
<div style="left:8px;top:116px;width:1px;height:844px;background:#cccedb;"></div>
<div style="left:1474.5px;top:328px;width:18px;height:225.4px;background:#c2c3c9;"></div>
<div style="left:1469.8px;top:183.4px;width:6.8px;height:28.6px;background:#107c10;"></div>
<div style="left:1469.8px;top:217px;width:6.8px;height:16px;background:#107c10;"></div>
<div style="left:1469.8px;top:260px;width:6.8px;height:50px;background:#107c10;"></div>
<div style="left:1469.8px;top:326.7px;width:6.8px;height:11.1px;background:#107c10;"></div>
<div style="left:1469.8px;top:374.6px;width:6.8px;height:24.4px;background:#107c10;"></div>
<div style="left:1469.8px;top:408px;width:6.8px;height:25px;background:#107c10;"></div>
<div style="left:1469.8px;top:461.5px;width:6.8px;height:12.5px;background:#107c10;"></div>
<div style="left:1469.8px;top:483.5px;width:6.8px;height:20.5px;background:#107c10;"></div>
<div style="left:1469.8px;top:521.6px;width:6.8px;height:12.4px;background:#107c10;"></div>
<div style="left:1469.8px;top:548.5px;width:6.8px;height:17.5px;background:#107c10;"></div>
<div style="left:1469.8px;top:573.5px;width:6.8px;height:21.5px;background:#107c10;"></div>
<div style="left:1469.8px;top:641px;width:6.8px;height:18px;background:#107c10;"></div>
<div style="left:1469.8px;top:250px;width:6.8px;height:6px;background:#e0606e;"></div>
<div style="left:1469.8px;top:341.8px;width:6.8px;height:21px;background:repeating-linear-gradient(-60deg,#1e88e8 0,#1e88e8 2.6px,#ffffff 2.6px,#ffffff 4.6px);border:1px solid #1e88e8;"></div>
<div style="left:1469.8px;top:622px;width:6.8px;height:12.5px;background:repeating-linear-gradient(-60deg,#1e88e8 0,#1e88e8 2.6px,#ffffff 2.6px,#ffffff 4.6px);border:1px solid #1e88e8;"></div>
<div style="left:1484.5px;top:359px;width:6px;height:7px;background:#a03444;"></div>
<div style="left:1492px;top:177px;width:5.5px;height:6.5px;background:#a8a8b0;"></div>
<div style="left:1469px;top:481px;width:29px;height:2px;background:#0000c8;"></div>
<svg style="left:1477.5px;top:150.2px;" width="12" height="8" viewBox="0 0 12 8"><path d="M0.5 7 L6 1 L11.5 7 Z" fill="#868999"/></svg>
<svg style="left:1477px;top:923px;" width="12" height="8" viewBox="0 0 12 8"><path d="M0.5 1 L6 7 L11.5 1 Z" fill="#868999"/></svg>
<div style="left:9px;top:938px;width:1489px;height:22px;background:#f5f5f5;"></div>
<div style="left:9px;top:960px;width:1490px;height:1px;background:#cccedb;"></div>
<div style="left:10px;top:939px;width:73px;height:21px;background:#ffffff;border:1px solid #dcdce4;"></div>
<span id="f28" class="t" style="left:12px;top:939.5px;height:20px;line-height:20px;font-size:14.5px;color:#1e1e1e;letter-spacing:0.19px;">119 %</span>
<svg style="left:72px;top:947px;" width="8" height="5" viewBox="0 0 8 5"><path d="M0 0 H8 L4 4.5 Z" fill="#555"/></svg>
<svg style="left:87px;top:939px;" width="18" height="20" viewBox="0 0 18 20"><path d="M9 2 C5 2 2.5 5 3 8.5 C3.3 10.5 4.8 11.8 5.3 13 C5.6 14 5.5 16 5.5 17.5 M9 2 C13 2 15.5 5 15 8.5 C14.7 10.5 13.2 11.8 12.7 13 C12.4 14 12.5 16 12.5 17.5 M6 6 L9 9 L12 6 M9 9 V17.5 M1 10.5 L4 13.5 M1.5 14.5 L4.5 11.5" fill="none" stroke="#8661c5" stroke-width="1.4"/></svg>
<svg style="left:136.5px;top:941px;" width="15" height="15" viewBox="0 0 15 15"><circle cx="7.6" cy="7.6" r="6.8" fill="#1f9b33"/><path d="M4.3 7.9 L6.7 10.3 L11 5.4" fill="none" stroke="#fff" stroke-width="1.6"/></svg>
<span class="t" style="left:158px;top:939.5px;height:20px;line-height:20px;font-size:13.9px;color:#1e1e1e;">未找到相关问题</span>
<div style="left:338px;top:941px;width:1px;height:18px;background:#c8c8d0;"></div>
<svg style="left:355px;top:938px;" width="20" height="20" viewBox="0 0 20 20"><path d="M17 1.5 L10.5 9" stroke="#555" stroke-width="2.4"/><path d="M7.5 7.5 L12.5 11.5 L8 19 L2.5 13.5 Z" fill="#dcb67a" stroke="#b8862e" stroke-width="0.8"/><path d="M3 3 V7 M1 5 H5 M6.5 1 V4 M5 2.5 H8" stroke="#1a6fc4" stroke-width="1"/></svg>
<svg style="left:377px;top:945px;" width="10" height="6" viewBox="0 0 10 6"><path d="M0.5 0.5 H9.5 L5 5.5 Z" fill="#1e1e1e"/></svg>
<span id="f29" class="t" style="left:1266px;top:939.5px;height:20px;line-height:20px;font-size:13.8px;color:#1e1e1e;letter-spacing:0.14px;">行: 48</span>
<span id="f30" class="t" style="left:1326px;top:939.5px;height:20px;line-height:20px;font-size:13.8px;color:#1e1e1e;letter-spacing:0.15px;">字符: 72</span>
<span class="t" style="left:1401px;top:939.5px;height:20px;line-height:20px;font-size:13.8px;color:#1e1e1e;">空格</span>
<span id="f31" class="t" style="left:1454px;top:939.5px;height:20px;line-height:20px;font-size:14.5px;color:#1e1e1e;letter-spacing:-1.34px;">CRLF</span>
<span id="f32" class="t" style="left:8px;top:968.5px;height:20px;line-height:20px;font-size:15.4px;color:#3c3c3c;letter-spacing:-0.40px;">错误列表</span>
<div style="left:8px;top:992px;width:60px;height:8px;background:#cccedb;"></div>
<span id="f33" class="t" style="left:83px;top:968.5px;height:20px;line-height:20px;font-size:15.4px;color:#3c3c3c;letter-spacing:-0.40px;">命令窗口</span>
<div style="left:83px;top:992px;width:60px;height:8px;background:#cccedb;"></div>
<span id="f34" class="t" style="left:158px;top:968.5px;height:20px;line-height:20px;font-size:15.4px;color:#3c3c3c;letter-spacing:-0.40px;">输出</span>
<div style="left:158px;top:992px;width:30px;height:8px;background:#cccedb;"></div>
<span id="f35" class="t" style="left:203px;top:968.5px;height:20px;line-height:20px;font-size:15.4px;color:#3c3c3c;letter-spacing:-0.39px;">程序包管理器控制台</span>
<div style="left:203px;top:992px;width:135px;height:8px;background:#cccedb;"></div>
<span id="f36" class="t" style="left:353px;top:968.5px;height:20px;line-height:20px;font-size:15.4px;color:#3c3c3c;letter-spacing:0.09px;">“SaveEventAsync”引用</span>
<div style="left:353px;top:992px;width:159px;height:8px;background:#cccedb;"></div>
<span id="f37" class="t" style="left:527px;top:968.5px;height:20px;line-height:20px;font-size:15.4px;color:#3c3c3c;letter-spacing:0.29px;">CodeLens</span>
<div style="left:527px;top:992px;width:72.5px;height:8px;background:#cccedb;"></div>
<span id="f38" class="t" style="left:614px;top:968.5px;height:20px;line-height:20px;font-size:15.4px;color:#3c3c3c;letter-spacing:0.53px;">查找“ConnectionStrings”</span>
<div style="left:614px;top:992px;width:178px;height:8px;background:#cccedb;"></div>
<div style="left:0px;top:1000px;width:1920px;height:30px;background:#006bc1;"></div>
<svg style="left:4.5px;top:1004.3px;" width="22" height="22" viewBox="0 0 22 22"><path d="M1.5 1.5 H19.8 V15.5 H13.7 L10.2 19.5 L6.7 15.5 H1.5 Z" fill="#1c7bc9" stroke="#ffffff" stroke-width="1.5"/></svg>
<span class="t" style="left:35px;top:1005.8px;height:20px;line-height:20px;font-size:15px;color:#ffffff;">就绪</span>
<svg style="left:1417px;top:1006px;" width="17" height="18" viewBox="0 0 17 18"><path d="M4.5 17 V2 M1 5.5 L4.5 2 L8 5.5 M12 1 V16 M8.5 12.5 L12 16 L15.5 12.5" fill="none" stroke="#ffffff" stroke-width="1.5"/></svg>
<span id="f39" class="t" style="left:1442px;top:1005.8px;height:20px;line-height:20px;font-size:15.5px;color:#ffffff;letter-spacing:0.77px;">0 / 0</span>
<svg style="left:1481px;top:1011px;" width="12" height="7" viewBox="0 0 12 7"><path d="M0.5 6.5 L6 0.8 L11.5 6.5 Z" fill="#ffffff"/></svg>
<svg style="left:1520px;top:1006px;" width="18" height="18" viewBox="0 0 18 18"><path d="M2 16 L3.2 11.5 L13 1.8 C14 1 15.2 1.2 16 2 C16.8 2.8 17 4 16.2 5 L6.5 14.8 Z" fill="none" stroke="#ffffff" stroke-width="1.4"/></svg>
<span id="f40" class="t" style="left:1547px;top:1005.8px;height:20px;line-height:20px;font-size:15.5px;color:#ffffff;letter-spacing:-0.12px;">17</span>
<svg style="left:1592px;top:1004px;" width="18" height="22" viewBox="0 0 18 22"><circle cx="4.5" cy="4" r="2.6" fill="none" stroke="#fff" stroke-width="1.4"/><circle cx="4.5" cy="18" r="2.6" fill="none" stroke="#fff" stroke-width="1.4"/><circle cx="14" cy="8" r="2.6" fill="none" stroke="#fff" stroke-width="1.4"/><path d="M4.5 6.6 V15.4 M14 10.6 C14 13.5 9 12.5 5.5 15.5" fill="none" stroke="#fff" stroke-width="1.4"/><circle cx="13" cy="17.5" r="3.6" fill="#fff"/><path d="M13 19.8 V15.5 M11.3 17 L13 15.3 L14.7 17" fill="none" stroke="#006bc1" stroke-width="1.1"/></svg>
<span id="f41" class="t" style="left:1618px;top:1005.8px;height:20px;line-height:20px;font-size:15.5px;color:#ffffff;letter-spacing:0.44px;">master</span>
<div style="left:1698px;top:998.3px;width:222px;height:31.7px;background:#fcfdff;border:1px solid #b9cde9;border-radius:3px;"></div>
<svg style="left:1666px;top:990px;" width="46" height="40" viewBox="0 0 46 40"><g transform="translate(0.5,2.2) rotate(-16 23 22)"><rect x="5.5" y="4.5" width="34.5" height="38" rx="4.5" fill="#f2541b"/><path d="M33.5 12.5 C27 8.5 12.5 9.5 12 16.5 C11.6 23 33.5 20.5 33 28 C32.5 34.5 17 35.5 10.5 31.5" fill="none" stroke="#ffffff" stroke-width="4.6" stroke-linecap="round"/></g></svg>
<span class="t" style="left:1715.5px;top:1002.5px;height:24px;line-height:24px;font-size:18.5px;color:#1467d6;font-weight:bold;">中</span>
<svg style="left:1745px;top:1005px;" width="18" height="20" viewBox="0 0 18 20"><circle cx="4" cy="5.5" r="1.8" fill="none" stroke="#1467d6" stroke-width="1.3"/><path d="M11 9 C14 9 14.5 13 10.5 15.5" fill="none" stroke="#1467d6" stroke-width="2.2" stroke-linecap="round"/></svg>
<svg style="left:1776px;top:1003px;" width="16" height="25" viewBox="0 0 16 25"><rect x="4.5" y="1" width="7" height="13" rx="3.5" fill="#1467d6"/><path d="M1.5 10 C1.5 19 14.5 19 14.5 10 M8 17 V22 M4.5 22.5 H11.5" fill="none" stroke="#1467d6" stroke-width="1.6"/></svg>
<svg style="left:1805.5px;top:1006.5px;" width="19" height="16" viewBox="0 0 19 16"><rect x="0.5" y="0.5" width="18" height="15" rx="2" fill="#1467d6"/><path d="M2.5 5.3 H16.5 M2.5 9 H16.5 M5.3 2.2 V9 M8.2 2.2 V9 M11.1 2.2 V9 M14 2.2 V9" stroke="#ffffff" stroke-width="0.9"/><path d="M4.5 12.3 H14.5" stroke="#ffffff" stroke-width="1.3"/></svg>
<svg style="left:1833px;top:1004px;" width="22" height="23" viewBox="0 0 22 23"><path d="M7 1.5 L1 5 L3 10 L5.5 9 V21.5 H16.5 V9 L19 10 L21 5 L15 1.5 C13 4 9 4 7 1.5 Z" fill="#f2541b"/></svg>
<svg style="left:1864px;top:1005px;" width="20" height="21" viewBox="0 0 20 21"><rect x="1" y="1" width="7.5" height="7.5" rx="1.5" fill="#1467d6"/><rect x="1" y="11.5" width="7.5" height="7.5" rx="1.5" fill="#1467d6"/><rect x="11.5" y="11.5" width="7.5" height="7.5" rx="1.5" fill="#1467d6"/><rect x="12" y="1.5" width="6.5" height="6.5" rx="3.2" fill="#1467d6"/></svg>
<svg style="left:1890px;top:1003px;" width="30" height="26" viewBox="0 0 30 26"><ellipse cx="13" cy="13" rx="11" ry="10.5" fill="#f6efe6" stroke="#d8c9b5" stroke-width="1"/><path d="M3 10 C8 6 18 6 23.5 10 L22.5 14.5 C17 12 9 12 3.5 14.5 Z" fill="#e0612a"/><circle cx="9" cy="12" r="1.3" fill="#333"/><circle cx="17" cy="12" r="1.3" fill="#333"/><path d="M26 2 L27 5 L30 6 L27 7 L26 10 L25 7 L22 6 L25 5 Z" fill="#f7c948"/></svg>
<div style="left:1907.3px;top:837.5px;width:9.2px;height:32px;background:linear-gradient(#ececf1,#dcdce3);border-radius:4.6px 4.6px 0 0;box-shadow:0 0 2px rgba(0,0,0,0.12);"></div>
<div style="left:1907.3px;top:868.6px;width:9.2px;height:41.2px;background:linear-gradient(#14e07a,#1fc8a8 55%,#1a9ff5);border-radius:0 0 4.6px 4.6px;"></div>
<div style="left:1507.4px;top:88px;width:373.5999999999999px;height:848.8px;background:#f5f5f5;border:1px solid #cccedb;"></div>
<div style="left:1508.4px;top:89px;width:371.5999999999999px;height:89.5px;background:#eeeef2;"></div>
<span class="t" style="left:1512px;top:92.5px;height:20px;line-height:20px;font-size:15px;color:#1e1e1e;">解决方案资源管理器</span>
<div style="left:1657px;top:99px;width:152px;height:6px;background-image:radial-gradient(circle,#b9b9c4 0.6px,transparent 0.9px),radial-gradient(circle,#b9b9c4 0.6px,transparent 0.9px);background-size:4px 4px;background-position:0 0,2px 2px;"></div>
<svg style="left:1818px;top:99px;" width="11" height="6" viewBox="0 0 11 6"><path d="M0.3 0.3 H10.3 L5.3 5.6 Z" fill="#1e1e1e"/></svg>
<svg style="left:1838px;top:95px;" width="12" height="15" viewBox="0 0 12 15"><path d="M3 1 H9 M4 1 V7.5 M8 1 V7.5 M1 7.8 H11 M6 8 V14" fill="none" stroke="#1e1e1e" stroke-width="1.5"/></svg>
<svg style="left:1859px;top:96px;" width="13" height="12" viewBox="0 0 13 12"><path d="M1 0.8 L12 11.2 M12 0.8 L1 11.2" stroke="#1e1e1e" stroke-width="1.5"/></svg>
<svg style="left:1515px;top:122px;" width="21" height="22" viewBox="0 0 21 22"><rect x="9.5" y="1.6" width="10.2" height="12.4" fill="#f5f5f5" stroke="#424242" stroke-width="1.2"/><path d="M11.8 4.6 H17.4 M11.8 7.1 H17.4 M11.8 9.6 H17.4 M13.5 12 H17.4" stroke="#424242" stroke-width="1"/><g transform="translate(0.3,9.3) scale(0.52)"><path d="M17.2 0.1 L24 3.4 V20.6 L17.2 23.9 L9.4 16.3 L5 20.2 L0.3 17.4 V6.6 L5 3.8 L9.4 7.7 Z" fill="#eeeef2" stroke="#eeeef2" stroke-width="3"/><path d="M17.2 0.1 L24 3.4 V20.6 L17.2 23.9 L9.4 16.3 L5 20.2 L0.3 17.4 V6.6 L5 3.8 L9.4 7.7 Z M3.1 9.2 V14.8 L6.1 12 Z M18.1 8.7 V15.3 L13.9 12 Z" fill="#8661c5" fill-rule="evenodd"/></g></svg>
<div style="left:1544px;top:120px;width:1px;height:24px;background:#cccedb;"></div>
<svg style="left:1552px;top:121px;" width="21" height="21" viewBox="0 0 21 21"><circle cx="11" cy="11.5" r="7" fill="none" stroke="#424242" stroke-width="1.4"/><path d="M11 7.5 V12 H15" fill="none" stroke="#424242" stroke-width="1.4"/><path d="M0.5 0.8 H7.5 L5 4 V7 L3.2 6 V4 Z" fill="#1a6fc4"/></svg>
<svg style="left:1581px;top:130px;" width="8" height="5" viewBox="0 0 8 5"><path d="M0 0 H8 L4 4.5 Z" fill="#717171"/></svg>
<svg style="left:1596px;top:126px;" width="18" height="13" viewBox="0 0 18 13"><path d="M1 4 H17 M13 0.8 L17 4 M1 9 H17 M5 12.2 L1 9" fill="none" stroke="#424242" stroke-width="1.4"/></svg>
<svg style="left:1621px;top:122px;" width="22" height="21" viewBox="0 0 22 21"><path d="M4.5 3 V1.2 H20.5 V17 H18.5" fill="none" stroke="#424242" stroke-width="1.3"/><rect x="1.5" y="4.5" width="16" height="15" rx="1" fill="none" stroke="#424242" stroke-width="1.4"/><path d="M5.5 12 H13.5" stroke="#424242" stroke-width="1.5"/></svg>
<svg style="left:1649px;top:122px;" width="20" height="21" viewBox="0 0 20 21"><rect x="6.5" y="1.5" width="12" height="13" rx="1.5" fill="none" stroke="#424242" stroke-width="1.3"/><rect x="1.5" y="6" width="12" height="13.5" rx="1.5" fill="#e4e4ea" stroke="#424242" stroke-width="1.3"/><path d="M6.5 6 V14.5 H13.5" fill="none" stroke="#424242" stroke-width="1"/></svg>
<div style="left:1677px;top:120px;width:1px;height:24px;background:#cccedb;"></div>
<div style="left:1684px;top:118.5px;width:27.5px;height:27.5px;background:#f3f6fb;border:1.3px solid #3a96e8;"></div>
<svg style="left:1687px;top:122px;" width="22" height="21" viewBox="0 0 22 21"><rect x="1.5" y="1.5" width="4" height="4" rx="1" fill="none" stroke="#1e1e1e" stroke-width="1.3"/><rect x="8" y="8.5" width="4" height="4" rx="1" fill="none" stroke="#1e1e1e" stroke-width="1.3"/><rect x="14.5" y="14" width="5" height="5" rx="1" fill="none" stroke="#1e1e1e" stroke-width="1.3"/><path d="M3.5 5.5 V10.5 H8 M10 12.5 V16.5 H14.5" fill="none" stroke="#1e1e1e" stroke-width="1.3"/></svg>
<svg style="left:1714px;top:130px;" width="8" height="5" viewBox="0 0 8 5"><path d="M0 0 H8 L4 4.5 Z" fill="#717171"/></svg>
<div style="left:1729px;top:120px;width:1px;height:24px;background:#cccedb;"></div>
<svg style="left:1737px;top:121px;" width="22" height="22" viewBox="0 0 22 22"><path d="M2 19.5 L11.5 10 C10.5 6.5 13 2.5 17.5 3 L14.5 6.2 L15.2 8.5 L17.5 9.2 L20.5 6 C21 10.5 17.5 13 13.5 12 L4 21.5 Z" fill="#424242"/><path d="M3 20.5 L11 12.5" stroke="#f5f5f5" stroke-width="1"/></svg>
<div style="left:1762px;top:118.5px;width:27.5px;height:28px;background:#f3f6fb;border:1.3px solid #3a96e8;"></div>
<svg style="left:1765px;top:124px;" width="22" height="17" viewBox="0 0 22 17"><path d="M1 14.5 H12 M3.5 14 V9.5 H15 V14" fill="none" stroke="#1e1e1e" stroke-width="1.5"/><path d="M16.5 6 L19 3 M18 9 H21 M14.5 4.5 L14 1.5" stroke="#e8a317" stroke-width="1.2"/></svg>
<div style="left:1510px;top:150.5px;width:367px;height:26px;background:#ffffff;border:1px solid #cccedb;"></div>
<span id="f42" class="t" style="left:1516px;top:154.5px;height:20px;line-height:20px;font-size:15px;color:#6d6d6d;letter-spacing:0.25px;">搜索解决方案资源管理器(Ctrl+;)</span>
<svg style="left:1842px;top:155px;" width="18" height="18" viewBox="0 0 18 18"><circle cx="10.8" cy="6" r="4.3" fill="none" stroke="#666" stroke-width="2.2"/><path d="M7.6 9.4 L1.3 15.6" stroke="#666" stroke-width="2.8"/></svg>
<svg style="left:1865px;top:162px;" width="8" height="5" viewBox="0 0 8 5"><path d="M0 0 H8 L4 4.5 Z" fill="#717171"/></svg>
<div style="left:1508.4px;top:419.2px;width:350.5999999999999px;height:24px;background:#cccedb;"></div>
<div style="left:1508.4px;top:177px;width:350.5999999999999px;height:738.5px;overflow:hidden;"><div style="left:-1508.4px;top:-177px;width:1920px;height:1030px;"><svg style="left:1566.5px;top:185.3px;" width="8" height="13" viewBox="0 0 8 13"><path d="M0.7 0.9 L6.1 6.4 L0.7 11.9 Z" fill="none" stroke="#1e1e1e" stroke-width="1.15"/></svg>
<svg style="left:1593.2px;top:184.4px;" width="21" height="14" viewBox="0 0 21 14"><rect x="0.8" y="7" width="4.4" height="4.4" rx="0.8" fill="#f5f5f5" stroke="#424242" stroke-width="1.3"/><path d="M5.2 9.2 H10" stroke="#424242" stroke-width="1.3"/><rect x="13" y="0.8" width="7" height="6" fill="#e4e4e4" stroke="#6a6a6a" stroke-width="1.2"/><rect x="9.8" y="5.6" width="7.6" height="6.4" fill="#e4e4e4" stroke="#424242" stroke-width="1.3"/></svg>
<span class="t" style="left:1619.5px;top:182.4px;height:20px;line-height:20px;font-size:15px;color:#1e1e1e;">依赖项</span>
<svg style="left:1566.5px;top:209.3px;" width="8" height="13" viewBox="0 0 8 13"><path d="M0.7 0.9 L6.1 6.4 L0.7 11.9 Z" fill="none" stroke="#1e1e1e" stroke-width="1.15"/></svg>
<svg style="left:1581.6px;top:211.3px;" width="8" height="11" viewBox="0 0 8 11"><path d="M2.2 4.6 V3.3 C2.2 0.4 5.8 0.4 5.8 3.3 V4.6" fill="none" stroke="#1a7fd4" stroke-width="1.3"/><rect x="0.8" y="4.4" width="6.4" height="5.4" rx="0.6" fill="#dce9f5" stroke="#1a7fd4" stroke-width="1.4"/></svg>
<svg style="left:1594.5px;top:207.6px;" width="18.5" height="16" viewBox="0 0 18.5 16"><path d="M0.8 1.2 H7.3 L8.8 3.2 H17.3 V13.9 H0.8 Z" fill="#d6bb7a" stroke="#b88a1e" stroke-width="1.4" stroke-linejoin="round"/><path d="M0.8 3.6 H7 L8.6 3.2" fill="none" stroke="#b88a1e" stroke-width="0.9"/></svg>
<span id="f43" class="t" style="left:1619.5px;top:206.4px;height:20px;line-height:20px;font-size:16px;color:#1e1e1e;letter-spacing:-0.03px;">Apis</span>
<svg style="left:1566.5px;top:233.3px;" width="8" height="13" viewBox="0 0 8 13"><path d="M0.7 0.9 L6.1 6.4 L0.7 11.9 Z" fill="none" stroke="#1e1e1e" stroke-width="1.15"/></svg>
<svg style="left:1581.6px;top:235.3px;" width="8" height="11" viewBox="0 0 8 11"><path d="M2.2 4.6 V3.3 C2.2 0.4 5.8 0.4 5.8 3.3 V4.6" fill="none" stroke="#1a7fd4" stroke-width="1.3"/><rect x="0.8" y="4.4" width="6.4" height="5.4" rx="0.6" fill="#dce9f5" stroke="#1a7fd4" stroke-width="1.4"/></svg>
<svg style="left:1594.5px;top:231.6px;" width="18.5" height="16" viewBox="0 0 18.5 16"><path d="M0.8 1.2 H7.3 L8.8 3.2 H17.3 V13.9 H0.8 Z" fill="#d6bb7a" stroke="#b88a1e" stroke-width="1.4" stroke-linejoin="round"/><path d="M0.8 3.6 H7 L8.6 3.2" fill="none" stroke="#b88a1e" stroke-width="0.9"/></svg>
<span id="f44" class="t" style="left:1619.5px;top:230.4px;height:20px;line-height:20px;font-size:16px;color:#1e1e1e;letter-spacing:-0.18px;">Extensions</span>
<svg style="left:1566.5px;top:257.3px;" width="8" height="13" viewBox="0 0 8 13"><path d="M0.7 0.9 L6.1 6.4 L0.7 11.9 Z" fill="none" stroke="#1e1e1e" stroke-width="1.15"/></svg>
<svg style="left:1581.6px;top:259.3px;" width="8" height="11" viewBox="0 0 8 11"><path d="M2.2 4.6 V3.3 C2.2 0.4 5.8 0.4 5.8 3.3 V4.6" fill="none" stroke="#1a7fd4" stroke-width="1.3"/><rect x="0.8" y="4.4" width="6.4" height="5.4" rx="0.6" fill="#dce9f5" stroke="#1a7fd4" stroke-width="1.4"/></svg>
<svg style="left:1594.5px;top:255.6px;" width="18.5" height="16" viewBox="0 0 18.5 16"><path d="M0.8 1.2 H7.3 L8.8 3.2 H17.3 V13.9 H0.8 Z" fill="#d6bb7a" stroke="#b88a1e" stroke-width="1.4" stroke-linejoin="round"/><path d="M0.8 3.6 H7 L8.6 3.2" fill="none" stroke="#b88a1e" stroke-width="0.9"/></svg>
<span id="f45" class="t" style="left:1619.5px;top:254.4px;height:20px;line-height:20px;font-size:16px;color:#1e1e1e;letter-spacing:0.23px;">Infrastructure</span>
<svg style="left:1566.5px;top:281.3px;" width="8" height="13" viewBox="0 0 8 13"><path d="M0.7 0.9 L6.1 6.4 L0.7 11.9 Z" fill="none" stroke="#1e1e1e" stroke-width="1.15"/></svg>
<svg style="left:1581.6px;top:283.3px;" width="8" height="11" viewBox="0 0 8 11"><path d="M2.2 4.6 V3.3 C2.2 0.4 5.8 0.4 5.8 3.3 V4.6" fill="none" stroke="#1a7fd4" stroke-width="1.3"/><rect x="0.8" y="4.4" width="6.4" height="5.4" rx="0.6" fill="#dce9f5" stroke="#1a7fd4" stroke-width="1.4"/></svg>
<svg style="left:1594.5px;top:279.6px;" width="18.5" height="16" viewBox="0 0 18.5 16"><path d="M0.8 1.2 H7.3 L8.8 3.2 H17.3 V13.9 H0.8 Z" fill="#d6bb7a" stroke="#b88a1e" stroke-width="1.4" stroke-linejoin="round"/><path d="M0.8 3.6 H7 L8.6 3.2" fill="none" stroke="#b88a1e" stroke-width="0.9"/></svg>
<span id="f46" class="t" style="left:1619.5px;top:278.4px;height:20px;line-height:20px;font-size:16px;color:#1e1e1e;letter-spacing:0.17px;">IntegrationEvents</span>
<svg style="left:1566.5px;top:305.3px;" width="8" height="13" viewBox="0 0 8 13"><path d="M0.7 0.9 L6.1 6.4 L0.7 11.9 Z" fill="none" stroke="#1e1e1e" stroke-width="1.15"/></svg>
<svg style="left:1581.6px;top:307.3px;" width="8" height="11" viewBox="0 0 8 11"><path d="M2.2 4.6 V3.3 C2.2 0.4 5.8 0.4 5.8 3.3 V4.6" fill="none" stroke="#1a7fd4" stroke-width="1.3"/><rect x="0.8" y="4.4" width="6.4" height="5.4" rx="0.6" fill="#dce9f5" stroke="#1a7fd4" stroke-width="1.4"/></svg>
<svg style="left:1594.5px;top:303.6px;" width="18.5" height="16" viewBox="0 0 18.5 16"><path d="M0.8 1.2 H7.3 L8.8 3.2 H17.3 V13.9 H0.8 Z" fill="#d6bb7a" stroke="#b88a1e" stroke-width="1.4" stroke-linejoin="round"/><path d="M0.8 3.6 H7 L8.6 3.2" fill="none" stroke="#b88a1e" stroke-width="0.9"/></svg>
<span id="f47" class="t" style="left:1619.5px;top:302.4px;height:20px;line-height:20px;font-size:16px;color:#1e1e1e;letter-spacing:0.78px;">Model</span>
<svg style="left:1566.5px;top:329.3px;" width="8" height="13" viewBox="0 0 8 13"><path d="M0.7 0.9 L6.1 6.4 L0.7 11.9 Z" fill="none" stroke="#1e1e1e" stroke-width="1.15"/></svg>
<svg style="left:1581.6px;top:331.3px;" width="8" height="11" viewBox="0 0 8 11"><path d="M2.2 4.6 V3.3 C2.2 0.4 5.8 0.4 5.8 3.3 V4.6" fill="none" stroke="#1a7fd4" stroke-width="1.3"/><rect x="0.8" y="4.4" width="6.4" height="5.4" rx="0.6" fill="#dce9f5" stroke="#1a7fd4" stroke-width="1.4"/></svg>
<svg style="left:1594.5px;top:327.6px;" width="18.5" height="16" viewBox="0 0 18.5 16"><path d="M0.8 1.2 H7.3 L8.8 3.2 H17.3 V13.9 H0.8 Z" fill="#d6bb7a" stroke="#b88a1e" stroke-width="1.4" stroke-linejoin="round"/><path d="M0.8 3.6 H7 L8.6 3.2" fill="none" stroke="#b88a1e" stroke-width="0.9"/></svg>
<span id="f48" class="t" style="left:1619.5px;top:326.4px;height:20px;line-height:20px;font-size:16px;color:#1e1e1e;letter-spacing:-0.68px;">Pics</span>
<svg style="left:1566.5px;top:353.3px;" width="8" height="13" viewBox="0 0 8 13"><path d="M0.7 0.9 L6.1 6.4 L0.7 11.9 Z" fill="none" stroke="#1e1e1e" stroke-width="1.15"/></svg>
<svg style="left:1581.6px;top:355.3px;" width="8" height="11" viewBox="0 0 8 11"><path d="M2.2 4.6 V3.3 C2.2 0.4 5.8 0.4 5.8 3.3 V4.6" fill="none" stroke="#1a7fd4" stroke-width="1.3"/><rect x="0.8" y="4.4" width="6.4" height="5.4" rx="0.6" fill="#dce9f5" stroke="#1a7fd4" stroke-width="1.4"/></svg>
<svg style="left:1594.5px;top:351.6px;" width="18.5" height="16" viewBox="0 0 18.5 16"><path d="M0.8 1.2 H7.3 L8.8 3.2 H17.3 V13.9 H0.8 Z" fill="#d6bb7a" stroke="#b88a1e" stroke-width="1.4" stroke-linejoin="round"/><path d="M0.8 3.6 H7 L8.6 3.2" fill="none" stroke="#b88a1e" stroke-width="0.9"/></svg>
<span id="f49" class="t" style="left:1619.5px;top:350.4px;height:20px;line-height:20px;font-size:16px;color:#1e1e1e;letter-spacing:-0.23px;">Services</span>
<svg style="left:1565.5px;top:380.0px;" width="10" height="10" viewBox="0 0 10 10"><path d="M9 0.5 V9 H0.5 Z" fill="#1e1e1e"/></svg>
<svg style="left:1581.6px;top:379.3px;" width="8" height="11" viewBox="0 0 8 11"><path d="M2.2 4.6 V3.3 C2.2 0.4 5.8 0.4 5.8 3.3 V4.6" fill="none" stroke="#1a7fd4" stroke-width="1.3"/><rect x="0.8" y="4.4" width="6.4" height="5.4" rx="0.6" fill="#dce9f5" stroke="#1a7fd4" stroke-width="1.4"/></svg>
<svg style="left:1594.5px;top:375.6px;" width="18.5" height="16" viewBox="0 0 18.5 16"><path d="M0.8 1.2 H7.3 L8.8 3.2 H17.3 V13.9 H0.8 Z" fill="#d6bb7a" stroke="#b88a1e" stroke-width="1.4" stroke-linejoin="round"/><path d="M0.8 3.6 H7 L8.6 3.2" fill="none" stroke="#b88a1e" stroke-width="0.9"/></svg>
<span id="f50" class="t" style="left:1619.5px;top:374.4px;height:20px;line-height:20px;font-size:16px;color:#1e1e1e;letter-spacing:0.14px;">Setup</span>
<svg style="left:1603.6px;top:403.3px;" width="8" height="11" viewBox="0 0 8 11"><path d="M2.2 4.6 V3.3 C2.2 0.4 5.8 0.4 5.8 3.3 V4.6" fill="none" stroke="#1a7fd4" stroke-width="1.3"/><rect x="0.8" y="4.4" width="6.4" height="5.4" rx="0.6" fill="#dce9f5" stroke="#1a7fd4" stroke-width="1.4"/></svg>
<svg style="left:1617.5px;top:399.2px;" width="16" height="18" viewBox="0 0 16 18"><path d="M1.6 0.9 H10.2 L14.4 5.1 V17.1 H1.6 Z" fill="#e9e9e9" stroke="#707070" stroke-width="1.5" stroke-linejoin="round"/><path d="M10.2 0.9 V5.1 H14.4" fill="none" stroke="#707070" stroke-width="1"/><text x="8" y="13.6" font-family="Liberation Sans,sans-serif" font-size="8.2" font-weight="bold" fill="#4a4a4a" text-anchor="middle" letter-spacing="1.6">{}</text></svg>
<span id="f51" class="t" style="left:1642px;top:398.4px;height:20px;line-height:20px;font-size:16px;color:#1e1e1e;letter-spacing:0.22px;">catalog.json</span>
<svg style="left:1565.5px;top:428.0px;" width="10" height="10" viewBox="0 0 10 10"><path d="M9 0.5 V9 H0.5 Z" fill="#1e1e1e"/></svg>
<svg style="left:1581.6px;top:427.3px;" width="8" height="11" viewBox="0 0 8 11"><path d="M2.2 4.6 V3.3 C2.2 0.4 5.8 0.4 5.8 3.3 V4.6" fill="none" stroke="#1a7fd4" stroke-width="1.3"/><rect x="0.8" y="4.4" width="6.4" height="5.4" rx="0.6" fill="#dce9f5" stroke="#1a7fd4" stroke-width="1.4"/></svg>
<svg style="left:1595.0px;top:423.2px;" width="16" height="18" viewBox="0 0 16 18"><path d="M1.6 0.9 H10.2 L14.4 5.1 V17.1 H1.6 Z" fill="#e9e9e9" stroke="#707070" stroke-width="1.5" stroke-linejoin="round"/><path d="M10.2 0.9 V5.1 H14.4" fill="none" stroke="#707070" stroke-width="1"/><text x="8" y="13.6" font-family="Liberation Sans,sans-serif" font-size="8.2" font-weight="bold" fill="#4a4a4a" text-anchor="middle" letter-spacing="1.6">{}</text></svg>
<span id="f52" class="t" style="left:1619.5px;top:422.4px;height:20px;line-height:20px;font-size:16px;color:#1e1e1e;letter-spacing:0.24px;">appsettings.json</span>
<svg style="left:1603.6px;top:451.3px;" width="8" height="11" viewBox="0 0 8 11"><path d="M2.2 4.6 V3.3 C2.2 0.4 5.8 0.4 5.8 3.3 V4.6" fill="none" stroke="#1a7fd4" stroke-width="1.3"/><rect x="0.8" y="4.4" width="6.4" height="5.4" rx="0.6" fill="#dce9f5" stroke="#1a7fd4" stroke-width="1.4"/></svg>
<svg style="left:1617.5px;top:447.2px;" width="16" height="18" viewBox="0 0 16 18"><path d="M1.6 0.9 H10.2 L14.4 5.1 V17.1 H1.6 Z" fill="#e9e9e9" stroke="#707070" stroke-width="1.5" stroke-linejoin="round"/><path d="M10.2 0.9 V5.1 H14.4" fill="none" stroke="#707070" stroke-width="1"/><text x="8" y="13.6" font-family="Liberation Sans,sans-serif" font-size="8.2" font-weight="bold" fill="#4a4a4a" text-anchor="middle" letter-spacing="1.6">{}</text></svg>
<span id="f53" class="t" style="left:1642px;top:446.4px;height:20px;line-height:20px;font-size:16px;color:#1e1e1e;letter-spacing:0.26px;">appsettings.Development.json</span>
<svg style="left:1581.6px;top:475.3px;" width="8" height="11" viewBox="0 0 8 11"><path d="M2.2 4.6 V3.3 C2.2 0.4 5.8 0.4 5.8 3.3 V4.6" fill="none" stroke="#1a7fd4" stroke-width="1.3"/><rect x="0.8" y="4.4" width="6.4" height="5.4" rx="0.6" fill="#dce9f5" stroke="#1a7fd4" stroke-width="1.4"/></svg>
<svg style="left:1593.9px;top:470.2px;" width="20" height="20" viewBox="0 0 20 20"><path d="M8.5 14 V4 C8.5 1.2 10.5 0.9 13 0.9 H17 C19.3 0.9 19.3 4.4 17 4.4 H14 V14 Z" fill="#e9e9e9" stroke="#5a5a5a" stroke-width="1.3" stroke-linejoin="round"/><path d="M14 4.4 C15.8 4.4 15.8 1.2 14 0.9" fill="none" stroke="#5a5a5a" stroke-width="1"/><circle cx="6.2" cy="13" r="6" fill="#1a7fd4"/><path d="M0.4 13 H12 M6.2 7.2 V18.8 M1.4 10 H11 M1.4 16 H11 M6.2 7.2 C3 9.8 3 16.2 6.2 18.8 C9.4 16.2 9.4 9.8 6.2 7.2" fill="none" stroke="#d6e9fb" stroke-width="0.9"/></svg>
<span id="f54" class="t" style="left:1619.5px;top:470.4px;height:20px;line-height:20px;font-size:16px;color:#1e1e1e;letter-spacing:0.12px;">Catalog.API.http</span>
<svg style="left:1581.6px;top:499.3px;" width="8" height="11" viewBox="0 0 8 11"><path d="M2.2 4.6 V3.3 C2.2 0.4 5.8 0.4 5.8 3.3 V4.6" fill="none" stroke="#1a7fd4" stroke-width="1.3"/><rect x="0.8" y="4.4" width="6.4" height="5.4" rx="0.6" fill="#dce9f5" stroke="#1a7fd4" stroke-width="1.4"/></svg>
<svg style="left:1595.0px;top:495.2px;" width="16" height="18" viewBox="0 0 16 18"><path d="M1.6 0.9 H10.2 L14.4 5.1 V17.1 H1.6 Z" fill="#e9e9e9" stroke="#707070" stroke-width="1.5" stroke-linejoin="round"/><path d="M10.2 0.9 V5.1 H14.4" fill="none" stroke="#707070" stroke-width="1"/><text x="8" y="13.6" font-family="Liberation Sans,sans-serif" font-size="8.2" font-weight="bold" fill="#4a4a4a" text-anchor="middle" letter-spacing="1.6">{}</text></svg>
<span id="f55" class="t" style="left:1619.5px;top:494.4px;height:20px;line-height:20px;font-size:16px;color:#1e1e1e;letter-spacing:-0.10px;">Catalog.API.json</span>
<svg style="left:1581.6px;top:523.3px;" width="8" height="11" viewBox="0 0 8 11"><path d="M2.2 4.6 V3.3 C2.2 0.4 5.8 0.4 5.8 3.3 V4.6" fill="none" stroke="#1a7fd4" stroke-width="1.3"/><rect x="0.8" y="4.4" width="6.4" height="5.4" rx="0.6" fill="#dce9f5" stroke="#1a7fd4" stroke-width="1.4"/></svg>
<svg style="left:1595.0px;top:519.2px;" width="16" height="18" viewBox="0 0 16 18"><path d="M1.6 0.9 H10.2 L14.4 5.1 V17.1 H1.6 Z" fill="#e9e9e9" stroke="#707070" stroke-width="1.5" stroke-linejoin="round"/><path d="M10.2 0.9 V5.1 H14.4" fill="none" stroke="#707070" stroke-width="1"/><text x="8" y="13.6" font-family="Liberation Sans,sans-serif" font-size="8.2" font-weight="bold" fill="#4a4a4a" text-anchor="middle" letter-spacing="1.6">{}</text></svg>
<span id="f56" class="t" style="left:1619.5px;top:518.4px;height:20px;line-height:20px;font-size:16px;color:#1e1e1e;letter-spacing:-0.16px;">Catalog.API_v2.json</span>
<svg style="left:1566.5px;top:545.3px;" width="8" height="13" viewBox="0 0 8 13"><path d="M0.7 0.9 L6.1 6.4 L0.7 11.9 Z" fill="none" stroke="#1e1e1e" stroke-width="1.15"/></svg>
<svg style="left:1581.6px;top:547.3px;" width="8" height="11" viewBox="0 0 8 11"><path d="M2.2 4.6 V3.3 C2.2 0.4 5.8 0.4 5.8 3.3 V4.6" fill="none" stroke="#1a7fd4" stroke-width="1.3"/><rect x="0.8" y="4.4" width="6.4" height="5.4" rx="0.6" fill="#dce9f5" stroke="#1a7fd4" stroke-width="1.4"/></svg>
<svg style="left:1594.5px;top:544.2px;" width="20" height="16" viewBox="0 0 20 16"><text x="0" y="12.5" font-family="Liberation Sans,sans-serif" font-size="13.5" font-weight="bold" fill="#2a8a2a" letter-spacing="-0.3">C#</text></svg>
<span id="f57" class="t" style="left:1619.5px;top:542.4px;height:20px;line-height:20px;font-size:16px;color:#1e1e1e;letter-spacing:0.10px;">CatalogOptions.cs</span>
<svg style="left:1581.6px;top:571.3px;" width="8" height="11" viewBox="0 0 8 11"><path d="M2.2 4.6 V3.3 C2.2 0.4 5.8 0.4 5.8 3.3 V4.6" fill="none" stroke="#1a7fd4" stroke-width="1.3"/><rect x="0.8" y="4.4" width="6.4" height="5.4" rx="0.6" fill="#dce9f5" stroke="#1a7fd4" stroke-width="1.4"/></svg>
<svg style="left:1594.5px;top:568.2px;" width="20" height="16" viewBox="0 0 20 16"><text x="0" y="12.5" font-family="Liberation Sans,sans-serif" font-size="13.5" font-weight="bold" fill="#2a8a2a" letter-spacing="-0.3">C#</text></svg>
<span id="f58" class="t" style="left:1619.5px;top:566.4px;height:20px;line-height:20px;font-size:16px;color:#1e1e1e;letter-spacing:-0.11px;">GlobalUsings.cs</span>
<svg style="left:1566.5px;top:593.3px;" width="8" height="13" viewBox="0 0 8 13"><path d="M0.7 0.9 L6.1 6.4 L0.7 11.9 Z" fill="none" stroke="#1e1e1e" stroke-width="1.15"/></svg>
<svg style="left:1581.6px;top:595.3px;" width="8" height="11" viewBox="0 0 8 11"><path d="M2.2 4.6 V3.3 C2.2 0.4 5.8 0.4 5.8 3.3 V4.6" fill="none" stroke="#1a7fd4" stroke-width="1.3"/><rect x="0.8" y="4.4" width="6.4" height="5.4" rx="0.6" fill="#dce9f5" stroke="#1a7fd4" stroke-width="1.4"/></svg>
<svg style="left:1594.5px;top:592.2px;" width="20" height="16" viewBox="0 0 20 16"><text x="0" y="12.5" font-family="Liberation Sans,sans-serif" font-size="13.5" font-weight="bold" fill="#2a8a2a" letter-spacing="-0.3">C#</text></svg>
<span id="f59" class="t" style="left:1619.5px;top:590.4px;height:20px;line-height:20px;font-size:16px;color:#1e1e1e;letter-spacing:0.02px;">Program.cs</span>
<svg style="left:1544px;top:617.3px;" width="8" height="13" viewBox="0 0 8 13"><path d="M0.7 0.9 L6.1 6.4 L0.7 11.9 Z" fill="none" stroke="#1e1e1e" stroke-width="1.15"/></svg>
<svg style="left:1559.1px;top:619.3px;" width="8" height="11" viewBox="0 0 8 11"><path d="M2.2 4.6 V3.3 C2.2 0.4 5.8 0.4 5.8 3.3 V4.6" fill="none" stroke="#1a7fd4" stroke-width="1.3"/><rect x="0.8" y="4.4" width="6.4" height="5.4" rx="0.6" fill="#dce9f5" stroke="#1a7fd4" stroke-width="1.4"/></svg>
<svg style="left:1571.3px;top:615.8px;" width="19" height="16" viewBox="0 0 19 16"><rect x="0.7" y="0.7" width="16.8" height="13.8" rx="1" fill="#ebebeb" stroke="#6a6a6a" stroke-width="1.3"/><text x="9.1" y="11.2" font-family="Liberation Sans,sans-serif" font-size="9.4" font-weight="bold" fill="#2f9a38" text-anchor="middle">C#</text></svg>
<span id="f60" class="t" style="left:1597px;top:614.4px;height:20px;line-height:20px;font-size:16px;color:#1e1e1e;letter-spacing:0.35px;">ClientApp</span>
<svg style="left:1544px;top:641.3px;" width="8" height="13" viewBox="0 0 8 13"><path d="M0.7 0.9 L6.1 6.4 L0.7 11.9 Z" fill="none" stroke="#1e1e1e" stroke-width="1.15"/></svg>
<svg style="left:1559.1px;top:643.3px;" width="8" height="11" viewBox="0 0 8 11"><path d="M2.2 4.6 V3.3 C2.2 0.4 5.8 0.4 5.8 3.3 V4.6" fill="none" stroke="#1a7fd4" stroke-width="1.3"/><rect x="0.8" y="4.4" width="6.4" height="5.4" rx="0.6" fill="#dce9f5" stroke="#1a7fd4" stroke-width="1.4"/></svg>
<svg style="left:1571.0px;top:639.2px;" width="19" height="18" viewBox="0 0 19 18"><path d="M1 14.5 V2 H17.5 V14.5 H1 Z" fill="#e9e9e9" stroke="#555" stroke-width="1.3"/><path d="M1 2.6 H17.5" stroke="#555" stroke-width="1.8"/><path d="M1 5.8 H17.5" stroke="#555" stroke-width="1.1"/><path d="M6 7.8 L11.8 17.6 H0.2 Z" fill="#8b5cf6" stroke="#f5f5f5" stroke-width="0.8"/></svg>
<span id="f61" class="t" style="left:1597px;top:638.4px;height:20px;line-height:20px;font-size:16px;color:#1e1e1e;letter-spacing:0.42px;">eShop.AppHost</span>
<svg style="left:1544px;top:665.3px;" width="8" height="13" viewBox="0 0 8 13"><path d="M0.7 0.9 L6.1 6.4 L0.7 11.9 Z" fill="none" stroke="#1e1e1e" stroke-width="1.15"/></svg>
<svg style="left:1559.1px;top:667.3px;" width="8" height="11" viewBox="0 0 8 11"><path d="M2.2 4.6 V3.3 C2.2 0.4 5.8 0.4 5.8 3.3 V4.6" fill="none" stroke="#1a7fd4" stroke-width="1.3"/><rect x="0.8" y="4.4" width="6.4" height="5.4" rx="0.6" fill="#dce9f5" stroke="#1a7fd4" stroke-width="1.4"/></svg>
<svg style="left:1571.3px;top:663.8px;" width="19" height="16" viewBox="0 0 19 16"><rect x="0.7" y="0.7" width="16.8" height="13.8" rx="1" fill="#ebebeb" stroke="#6a6a6a" stroke-width="1.3"/><text x="9.1" y="11.2" font-family="Liberation Sans,sans-serif" font-size="9.4" font-weight="bold" fill="#2f9a38" text-anchor="middle">C#</text></svg>
<span id="f62" class="t" style="left:1597px;top:662.4px;height:20px;line-height:20px;font-size:16px;color:#1e1e1e;letter-spacing:-0.01px;">eShop.ServiceDefaults</span>
<svg style="left:1544px;top:689.3px;" width="8" height="13" viewBox="0 0 8 13"><path d="M0.7 0.9 L6.1 6.4 L0.7 11.9 Z" fill="none" stroke="#1e1e1e" stroke-width="1.15"/></svg>
<svg style="left:1559.1px;top:691.3px;" width="8" height="11" viewBox="0 0 8 11"><path d="M2.2 4.6 V3.3 C2.2 0.4 5.8 0.4 5.8 3.3 V4.6" fill="none" stroke="#1a7fd4" stroke-width="1.3"/><rect x="0.8" y="4.4" width="6.4" height="5.4" rx="0.6" fill="#dce9f5" stroke="#1a7fd4" stroke-width="1.4"/></svg>
<svg style="left:1571.3px;top:687.8px;" width="19" height="16" viewBox="0 0 19 16"><rect x="0.7" y="0.7" width="16.8" height="13.8" rx="1" fill="#ebebeb" stroke="#6a6a6a" stroke-width="1.3"/><text x="9.1" y="11.2" font-family="Liberation Sans,sans-serif" font-size="9.4" font-weight="bold" fill="#2f9a38" text-anchor="middle">C#</text></svg>
<span id="f63" class="t" style="left:1597px;top:686.4px;height:20px;line-height:20px;font-size:16px;color:#1e1e1e;letter-spacing:-0.44px;">EventBus</span>
<svg style="left:1544px;top:713.3px;" width="8" height="13" viewBox="0 0 8 13"><path d="M0.7 0.9 L6.1 6.4 L0.7 11.9 Z" fill="none" stroke="#1e1e1e" stroke-width="1.15"/></svg>
<svg style="left:1559.1px;top:715.3px;" width="8" height="11" viewBox="0 0 8 11"><path d="M2.2 4.6 V3.3 C2.2 0.4 5.8 0.4 5.8 3.3 V4.6" fill="none" stroke="#1a7fd4" stroke-width="1.3"/><rect x="0.8" y="4.4" width="6.4" height="5.4" rx="0.6" fill="#dce9f5" stroke="#1a7fd4" stroke-width="1.4"/></svg>
<svg style="left:1571.3px;top:711.8px;" width="19" height="16" viewBox="0 0 19 16"><rect x="0.7" y="0.7" width="16.8" height="13.8" rx="1" fill="#ebebeb" stroke="#6a6a6a" stroke-width="1.3"/><text x="9.1" y="11.2" font-family="Liberation Sans,sans-serif" font-size="9.4" font-weight="bold" fill="#2f9a38" text-anchor="middle">C#</text></svg>
<span id="f64" class="t" style="left:1597px;top:710.4px;height:20px;line-height:20px;font-size:16px;color:#1e1e1e;letter-spacing:-0.03px;">EventBusRabbitMQ</span>
<svg style="left:1544px;top:737.3px;" width="8" height="13" viewBox="0 0 8 13"><path d="M0.7 0.9 L6.1 6.4 L0.7 11.9 Z" fill="none" stroke="#1e1e1e" stroke-width="1.15"/></svg>
<svg style="left:1559.1px;top:739.3px;" width="8" height="11" viewBox="0 0 8 11"><path d="M2.2 4.6 V3.3 C2.2 0.4 5.8 0.4 5.8 3.3 V4.6" fill="none" stroke="#1a7fd4" stroke-width="1.3"/><rect x="0.8" y="4.4" width="6.4" height="5.4" rx="0.6" fill="#dce9f5" stroke="#1a7fd4" stroke-width="1.4"/></svg>
<svg style="left:1571.5px;top:735.2px;" width="19" height="18" viewBox="0 0 19 18"><path d="M5.5 2 H17.5 V14.5 H11" fill="none" stroke="#555" stroke-width="1.3"/><path d="M5.5 3.2 H17.5" stroke="#555" stroke-width="2.4"/><circle cx="5.8" cy="12" r="5.8" fill="#1a7fd4"/><path d="M0.2 12 H11.4 M5.8 6.4 V17.6 M1.2 9.2 H10.4 M1.2 14.8 H10.4 M5.8 6.4 C2.8 9 2.8 15 5.8 17.6 C8.8 15 8.8 9 5.8 6.4" fill="none" stroke="#d6e9fb" stroke-width="0.9"/></svg>
<span id="f65" class="t" style="left:1597px;top:734.4px;height:20px;line-height:20px;font-size:16px;color:#1e1e1e;letter-spacing:0.64px;">HybridApp</span>
<svg style="left:1544px;top:761.3px;" width="8" height="13" viewBox="0 0 8 13"><path d="M0.7 0.9 L6.1 6.4 L0.7 11.9 Z" fill="none" stroke="#1e1e1e" stroke-width="1.15"/></svg>
<svg style="left:1559.1px;top:763.3px;" width="8" height="11" viewBox="0 0 8 11"><path d="M2.2 4.6 V3.3 C2.2 0.4 5.8 0.4 5.8 3.3 V4.6" fill="none" stroke="#1a7fd4" stroke-width="1.3"/><rect x="0.8" y="4.4" width="6.4" height="5.4" rx="0.6" fill="#dce9f5" stroke="#1a7fd4" stroke-width="1.4"/></svg>
<svg style="left:1571.5px;top:759.2px;" width="19" height="18" viewBox="0 0 19 18"><path d="M5.5 2 H17.5 V14.5 H11" fill="none" stroke="#555" stroke-width="1.3"/><path d="M5.5 3.2 H17.5" stroke="#555" stroke-width="2.4"/><circle cx="5.8" cy="12" r="5.8" fill="#1a7fd4"/><path d="M0.2 12 H11.4 M5.8 6.4 V17.6 M1.2 9.2 H10.4 M1.2 14.8 H10.4 M5.8 6.4 C2.8 9 2.8 15 5.8 17.6 C8.8 15 8.8 9 5.8 6.4" fill="none" stroke="#d6e9fb" stroke-width="0.9"/></svg>
<span id="f66" class="t" style="left:1597px;top:758.4px;height:20px;line-height:20px;font-size:16px;color:#1e1e1e;letter-spacing:0.28px;">Identity.API</span>
<svg style="left:1544px;top:785.3px;" width="8" height="13" viewBox="0 0 8 13"><path d="M0.7 0.9 L6.1 6.4 L0.7 11.9 Z" fill="none" stroke="#1e1e1e" stroke-width="1.15"/></svg>
<svg style="left:1559.1px;top:787.3px;" width="8" height="11" viewBox="0 0 8 11"><path d="M2.2 4.6 V3.3 C2.2 0.4 5.8 0.4 5.8 3.3 V4.6" fill="none" stroke="#1a7fd4" stroke-width="1.3"/><rect x="0.8" y="4.4" width="6.4" height="5.4" rx="0.6" fill="#dce9f5" stroke="#1a7fd4" stroke-width="1.4"/></svg>
<svg style="left:1571.3px;top:783.8px;" width="19" height="16" viewBox="0 0 19 16"><rect x="0.7" y="0.7" width="16.8" height="13.8" rx="1" fill="#ebebeb" stroke="#6a6a6a" stroke-width="1.3"/><text x="9.1" y="11.2" font-family="Liberation Sans,sans-serif" font-size="9.4" font-weight="bold" fill="#2f9a38" text-anchor="middle">C#</text></svg>
<span id="f67" class="t" style="left:1597px;top:782.4px;height:20px;line-height:20px;font-size:16px;color:#1e1e1e;letter-spacing:0.09px;">IntegrationEventLogEF</span>
<svg style="left:1544px;top:809.3px;" width="8" height="13" viewBox="0 0 8 13"><path d="M0.7 0.9 L6.1 6.4 L0.7 11.9 Z" fill="none" stroke="#1e1e1e" stroke-width="1.15"/></svg>
<svg style="left:1559.1px;top:811.3px;" width="8" height="11" viewBox="0 0 8 11"><path d="M2.2 4.6 V3.3 C2.2 0.4 5.8 0.4 5.8 3.3 V4.6" fill="none" stroke="#1a7fd4" stroke-width="1.3"/><rect x="0.8" y="4.4" width="6.4" height="5.4" rx="0.6" fill="#dce9f5" stroke="#1a7fd4" stroke-width="1.4"/></svg>
<svg style="left:1571.5px;top:807.2px;" width="19" height="18" viewBox="0 0 19 18"><path d="M5.5 2 H17.5 V14.5 H11" fill="none" stroke="#555" stroke-width="1.3"/><path d="M5.5 3.2 H17.5" stroke="#555" stroke-width="2.4"/><circle cx="5.8" cy="12" r="5.8" fill="#1a7fd4"/><path d="M0.2 12 H11.4 M5.8 6.4 V17.6 M1.2 9.2 H10.4 M1.2 14.8 H10.4 M5.8 6.4 C2.8 9 2.8 15 5.8 17.6 C8.8 15 8.8 9 5.8 6.4" fill="none" stroke="#d6e9fb" stroke-width="0.9"/></svg>
<span id="f68" class="t" style="left:1597px;top:806.4px;height:20px;line-height:20px;font-size:16px;color:#1e1e1e;letter-spacing:0.13px;">Ordering.API</span>
<svg style="left:1544px;top:833.3px;" width="8" height="13" viewBox="0 0 8 13"><path d="M0.7 0.9 L6.1 6.4 L0.7 11.9 Z" fill="none" stroke="#1e1e1e" stroke-width="1.15"/></svg>
<svg style="left:1559.1px;top:835.3px;" width="8" height="11" viewBox="0 0 8 11"><path d="M2.2 4.6 V3.3 C2.2 0.4 5.8 0.4 5.8 3.3 V4.6" fill="none" stroke="#1a7fd4" stroke-width="1.3"/><rect x="0.8" y="4.4" width="6.4" height="5.4" rx="0.6" fill="#dce9f5" stroke="#1a7fd4" stroke-width="1.4"/></svg>
<svg style="left:1571.3px;top:831.8px;" width="19" height="16" viewBox="0 0 19 16"><rect x="0.7" y="0.7" width="16.8" height="13.8" rx="1" fill="#ebebeb" stroke="#6a6a6a" stroke-width="1.3"/><text x="9.1" y="11.2" font-family="Liberation Sans,sans-serif" font-size="9.4" font-weight="bold" fill="#2f9a38" text-anchor="middle">C#</text></svg>
<span id="f69" class="t" style="left:1597px;top:830.4px;height:20px;line-height:20px;font-size:16px;color:#1e1e1e;letter-spacing:0.28px;">Ordering.Domain</span>
<svg style="left:1544px;top:857.3px;" width="8" height="13" viewBox="0 0 8 13"><path d="M0.7 0.9 L6.1 6.4 L0.7 11.9 Z" fill="none" stroke="#1e1e1e" stroke-width="1.15"/></svg>
<svg style="left:1559.1px;top:859.3px;" width="8" height="11" viewBox="0 0 8 11"><path d="M2.2 4.6 V3.3 C2.2 0.4 5.8 0.4 5.8 3.3 V4.6" fill="none" stroke="#1a7fd4" stroke-width="1.3"/><rect x="0.8" y="4.4" width="6.4" height="5.4" rx="0.6" fill="#dce9f5" stroke="#1a7fd4" stroke-width="1.4"/></svg>
<svg style="left:1571.3px;top:855.8px;" width="19" height="16" viewBox="0 0 19 16"><rect x="0.7" y="0.7" width="16.8" height="13.8" rx="1" fill="#ebebeb" stroke="#6a6a6a" stroke-width="1.3"/><text x="9.1" y="11.2" font-family="Liberation Sans,sans-serif" font-size="9.4" font-weight="bold" fill="#2f9a38" text-anchor="middle">C#</text></svg>
<span id="f70" class="t" style="left:1597px;top:854.4px;height:20px;line-height:20px;font-size:16px;color:#1e1e1e;letter-spacing:0.28px;">Ordering.Infrastructure</span>
<svg style="left:1544px;top:881.3px;" width="8" height="13" viewBox="0 0 8 13"><path d="M0.7 0.9 L6.1 6.4 L0.7 11.9 Z" fill="none" stroke="#1e1e1e" stroke-width="1.15"/></svg>
<svg style="left:1559.1px;top:883.3px;" width="8" height="11" viewBox="0 0 8 11"><path d="M2.2 4.6 V3.3 C2.2 0.4 5.8 0.4 5.8 3.3 V4.6" fill="none" stroke="#1a7fd4" stroke-width="1.3"/><rect x="0.8" y="4.4" width="6.4" height="5.4" rx="0.6" fill="#dce9f5" stroke="#1a7fd4" stroke-width="1.4"/></svg>
<svg style="left:1571.3px;top:879.8px;" width="19" height="16" viewBox="0 0 19 16"><rect x="0.7" y="0.7" width="16.8" height="13.8" rx="1" fill="#ebebeb" stroke="#6a6a6a" stroke-width="1.3"/><text x="9.1" y="11.2" font-family="Liberation Sans,sans-serif" font-size="9.4" font-weight="bold" fill="#2f9a38" text-anchor="middle">C#</text></svg>
<span id="f71" class="t" style="left:1597px;top:878.4px;height:20px;line-height:20px;font-size:16px;color:#1e1e1e;letter-spacing:0.15px;">OrderProcessor</span>
<svg style="left:1544px;top:905.3px;" width="8" height="13" viewBox="0 0 8 13"><path d="M0.7 0.9 L6.1 6.4 L0.7 11.9 Z" fill="none" stroke="#1e1e1e" stroke-width="1.15"/></svg>
<svg style="left:1559.1px;top:907.3px;" width="8" height="11" viewBox="0 0 8 11"><path d="M2.2 4.6 V3.3 C2.2 0.4 5.8 0.4 5.8 3.3 V4.6" fill="none" stroke="#1a7fd4" stroke-width="1.3"/><rect x="0.8" y="4.4" width="6.4" height="5.4" rx="0.6" fill="#dce9f5" stroke="#1a7fd4" stroke-width="1.4"/></svg>
<svg style="left:1571.5px;top:903.2px;" width="19" height="18" viewBox="0 0 19 18"><path d="M5.5 2 H17.5 V14.5 H11" fill="none" stroke="#555" stroke-width="1.3"/><path d="M5.5 3.2 H17.5" stroke="#555" stroke-width="2.4"/><circle cx="5.8" cy="12" r="5.8" fill="#1a7fd4"/><path d="M0.2 12 H11.4 M5.8 6.4 V17.6 M1.2 9.2 H10.4 M1.2 14.8 H10.4 M5.8 6.4 C2.8 9 2.8 15 5.8 17.6 C8.8 15 8.8 9 5.8 6.4" fill="none" stroke="#d6e9fb" stroke-width="0.9"/></svg>
<span id="f72" class="t" style="left:1597px;top:902.4px;height:20px;line-height:20px;font-size:16px;color:#1e1e1e;letter-spacing:-0.01px;">PaymentProcessor</span></div></div>
<div style="left:1864.5px;top:288.5px;width:10.5px;height:443.5px;background:#c2c3c9;"></div>
<svg style="left:1864px;top:186px;" width="11" height="8" viewBox="0 0 11 8"><path d="M0.5 7 L5.5 1 L10.5 7 Z" fill="#868999"/></svg>
<svg style="left:1864px;top:900px;" width="11" height="8" viewBox="0 0 11 8"><path d="M0.5 1 L5.5 7 L10.5 1 Z" fill="#868999"/></svg>
<div style="left:1529px;top:919.5px;width:303px;height:11.5px;background:#c2c3c9;"></div>
<svg style="left:1516px;top:920px;" width="8" height="11" viewBox="0 0 8 11"><path d="M7 0.5 L1 5.5 L7 10.5 Z" fill="#868999"/></svg>
<svg style="left:1845px;top:920px;" width="8" height="11" viewBox="0 0 8 11"><path d="M1 0.5 L7 5.5 L1 10.5 Z" fill="#868999"/></svg>
<div style="left:1859px;top:915.5px;width:21px;height:20.3px;background:#eeeef2;"></div>
<div style="left:1507.4px;top:935px;width:149px;height:25px;background:#f5f5f5;border:1px solid #cccedb;border-top:none;"></div>
<span class="t" style="left:1514px;top:938.5px;height:20px;line-height:20px;font-size:15px;color:#006bc1;">解决方案资源管理器</span>
<span id="f73" class="t" style="left:1663px;top:938.5px;height:20px;line-height:20px;font-size:15px;color:#1e1e1e;letter-spacing:0.28px;">Git 更改</span>
<div style="left:1912.1px;top:88px;width:8px;height:59.8px;background:#cccedb;"></div>
<div style="left:1912.1px;top:163px;width:8px;height:29.8px;background:#cccedb;"></div>
<span class="t" style="left:1896.8px;top:88.5px;height:20px;line-height:20px;font-size:15px;color:#4a4a4a;transform-origin:0 0;transform:rotate(90deg) translate(0,-50%);">诊断工具</span>
<span class="t" style="left:1896.8px;top:163.5px;height:20px;line-height:20px;font-size:15px;color:#4a4a4a;transform-origin:0 0;transform:rotate(90deg) translate(0,-50%);">属性</span>
</body></html>
